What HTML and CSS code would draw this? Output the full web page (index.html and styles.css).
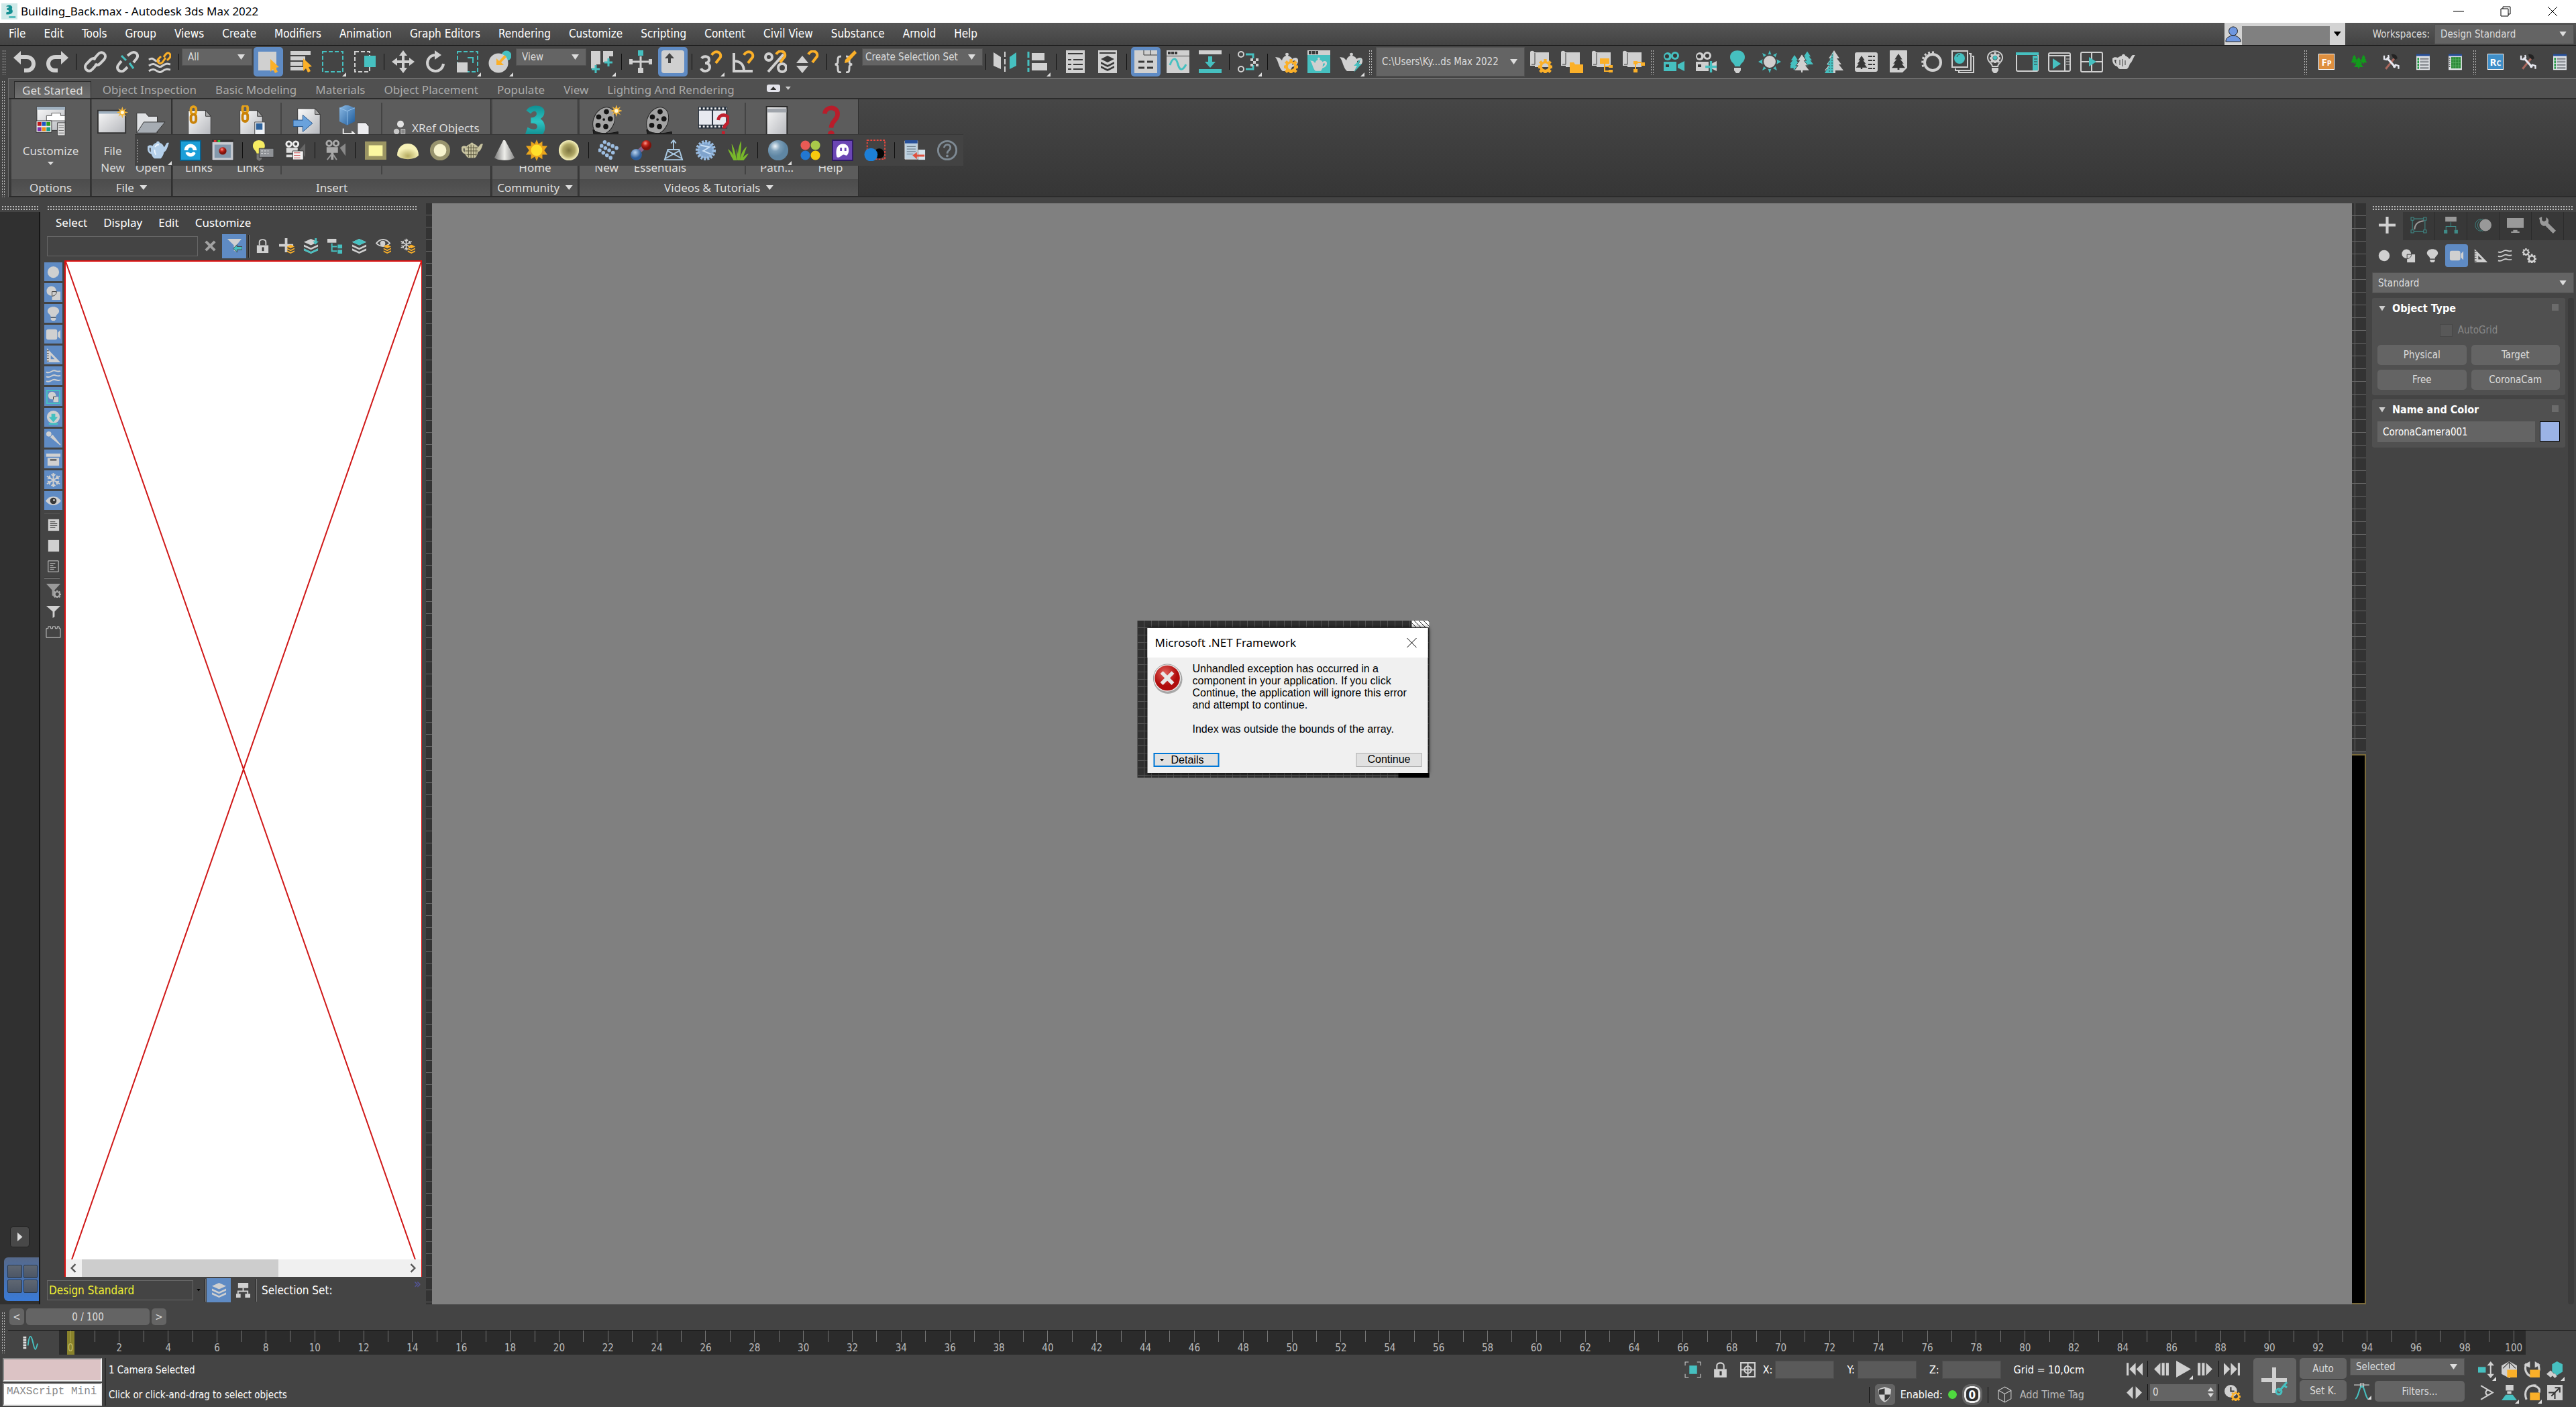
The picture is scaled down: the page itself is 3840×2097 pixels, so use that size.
FILE: index.html
```html
<!DOCTYPE html>
<html lang="en">
<head>
    <meta charset="UTF-8">
    <meta name="viewport" content="width=device-width, initial-scale=1.0">
    <title>Building_Back.max - Autodesk 3ds Max 2022</title>
    <link rel="stylesheet" href="styles.css">
</head>
<body>
    <!-- Icon sprite -->
    <svg class="sprite" aria-hidden="true">
        <defs>
            <linearGradient id="silver" x1="0" y1="0" x2="1" y2="1"><stop offset="0" stop-color="#fafafa"/><stop offset="1" stop-color="#b4b6bb"/></linearGradient>
            <linearGradient id="teal3" x1="0" y1="0" x2="0" y2="1"><stop offset="0" stop-color="#0f8f92"/><stop offset=".5" stop-color="#2cc4c2"/><stop offset="1" stop-color="#0d8487"/></linearGradient>
            <linearGradient id="blueCube" x1="0" y1="0" x2="1" y2="1"><stop offset="0" stop-color="#8dbbe6"/><stop offset="1" stop-color="#1d5a99"/></linearGradient>
            <linearGradient id="cone" x1="0" y1="0" x2="1" y2="0"><stop offset="0" stop-color="#777"/><stop offset=".5" stop-color="#eeeeea"/><stop offset="1" stop-color="#888"/></linearGradient>
            <radialGradient id="redBall" cx=".4" cy=".3"><stop offset="0" stop-color="#ff9c92"/><stop offset=".5" stop-color="#c3271c"/><stop offset="1" stop-color="#7e120b"/></radialGradient>
            <radialGradient id="blueBall" cx=".4" cy=".3"><stop offset="0" stop-color="#b8d4f0"/><stop offset="1" stop-color="#2d5d98"/></radialGradient>
            <radialGradient id="glassBall" cx=".35" cy=".3"><stop offset="0" stop-color="#eef5fa"/><stop offset=".5" stop-color="#7d9fb8"/><stop offset="1" stop-color="#5f86a3"/></radialGradient>
            <radialGradient id="lightBall"><stop offset="0" stop-color="#7e7640"/><stop offset=".6" stop-color="#b0a866"/><stop offset="1" stop-color="#fbf6c0"/></radialGradient>
            <radialGradient id="dome" cx=".5" cy=".8"><stop offset="0" stop-color="#b5ab60"/><stop offset="1" stop-color="#f7f2b8"/></radialGradient>
            <radialGradient id="error" cx=".4" cy=".3"><stop offset="0" stop-color="#e0605a"/><stop offset="1" stop-color="#b00c0c"/></radialGradient>
        </defs>
        <symbol id="max" viewBox="0 0 34 34"><path d="M0 0h34v34H0z" fill="#cfe9e8"/><path d="M10 6c8-5 16 0 12 6 5 6 0 13-12 11l1-5c5 2 7-3 3-4h-2v-4c5 0 5-4 0-3z" fill="#138f91"/><path d="M16 27h14v4H16z" fill="#4eb9b8"/></symbol>
        <symbol id="undo" viewBox="0 0 34 34"><path class="g" d="M0 11 11 1v6h8c9 0 14 6 14 13s-5 13-13 13h-4v-6h4c4 0 7-3 7-7s-3-7-7-7h-9v8z"/></symbol>
        <symbol id="redo" viewBox="0 0 34 34"><path class="g" d="M34 11 23 1v6h-8C6 7 1 13 1 20s5 13 13 13h4v-6h-4c-4 0-7-3-7-7s3-7 7-7h9v8z"/></symbol>
        <symbol id="link" viewBox="0 0 34 34"><path class="gs w4" d="m14 14 7-8c6-7 15 1 9 8l-6 6c-3 3-6 2-8 1M20 20l-7 8c-6 7-15-1-9-8l6-6c3-3 6-2 8-1"/></symbol>
        <symbol id="unlink" viewBox="0 0 34 34"><path class="gs w4" d="m17 8 4-3c7-6 15 2 9 8l-4 5M8 16l-4 5c-6 7 3 14 9 8l4-4"/><path class="ts w3" d="m8 8 7 7m5 4 6 8"/></symbol>
        <symbol id="bind" viewBox="0 0 34 34"><path class="gs w3" d="M1 14c8-6 8 6 16 1M1 23c10-8 13 6 20 0 5-4 8-3 12-2M1 31c10-8 13 6 20 0 5-4 8-3 12-2"/><path class="os w3" d="m23 10 3-4c4-5 9 0 6 5l-4 4M26 11l-5 7c-4 4-9-1-6-5l4-4"/></symbol>
        <symbol id="cursor" viewBox="0 0 34 34"><path class="g" d="M2 2h27v28H2z"/><path class="o" d="m20 13 13 12-5 1 3 6-4 2-3-6-4 4z"/></symbol>
        <symbol id="byname" viewBox="0 0 34 34"><path class="g" d="M2 1h30v6H2zM2 9h22v6H2zM2 17h18v6H2zM2 25h20v5H2z"/><path class="o" d="m21 12 13 12-5 1 3 6-4 2-3-6-4 4z"/></symbol>
        <symbol id="rect" viewBox="0 0 34 34"><path class="ts w2" stroke-dasharray="6 3" d="M2 2h30v30H2z"/></symbol>
        <symbol id="crossing" viewBox="0 0 34 34"><path class="gs w2" stroke-dasharray="6 3" d="M2 2h22v30H2z"/><path class="t" d="M16 8h17v17H16z"/></symbol>
        <symbol id="move" viewBox="0 0 34 34"><path class="g" d="m17 0 6 8h-4v7h7v-4l8 6-8 6v-4h-7v7h4l-6 8-6-8h4v-7H8v4l-8-6 8-6v4h7V8h-4z"/></symbol>
        <symbol id="rotate" viewBox="0 0 34 34"><path class="gs w4" d="M16 7a12 12 0 1 0 13 13"/><path class="g" d="m16 0 10 7-10 7z"/></symbol>
        <symbol id="scale" viewBox="0 0 34 34"><path class="ts w2" stroke-dasharray="6 3" d="M2 2h30v30H2z"/><path class="g" d="M1 18h16v15H1z"/><path class="ts w2" d="M17 11h8v8"/></symbol>
        <symbol id="place" viewBox="0 0 34 34"><circle class="t" cx="27" cy="8" r="7.500"/><circle class="g" cx="15" cy="19" r="14.500"/><path class="o" d="m12 12 4 4 8-9 3 3-8 8 4 4H12z"/></symbol>
        <symbol id="pivot" viewBox="0 0 34 34"><path class="g" d="M0 1h14v20H8v6H0zM18 1h15v8h-6v9h-9z"/><path class="ts w3" d="M7 22v12M1 28h12M26 12v12M20 18h12"/></symbol>
        <symbol id="manip" viewBox="0 0 34 34"><path class="t" d="M13 0h8v8h-8z"/><path class="gs w3" d="M17 9v19M3 17h28"/><path class="g" d="M13 26h8v8h-8zM0 13h5v8H0zM29 13h5v8h-5z"/></symbol>
        <symbol id="keys" viewBox="0 0 34 34"><rect class="g" width="34" height="34" rx="4"/><path d="m12 4 7 8h-5v7h-4v-7H5z" fill="#444"/></symbol>
        <symbol id="snap" viewBox="0 0 34 34"><path class="gs w4" d="M3 12c2-4 11-4 11 2 0 4-4 5-6 5 4 0 7 2 7 6 0 7-11 8-13 2"/><path class="os w4" d="M18 7c4-8 15-5 13 3l-7 9"/></symbol>
        <symbol id="angle" viewBox="0 0 34 34"><path class="gs w4" d="M3 4v27h28M3 16c10 0 15 6 15 15"/><path class="os w4" d="M18 7c4-8 15-5 13 3l-7 9"/></symbol>
        <symbol id="percent" viewBox="0 0 34 34"><path class="gs w4" d="M29 6 6 32"/><circle class="gs w4" cx="7" cy="10" r="5"/><circle class="gs w4" cx="27" cy="26" r="6"/><path class="os w4" d="M18 6c4-8 15-5 13 3l-7 9"/></symbol>
        <symbol id="spinsnap" viewBox="0 0 34 34"><path class="g" d="m9 8 9 11H0zM0 23h18L9 34z"/><path class="os w4" d="M18 6c4-8 15-5 13 3l-7 9"/></symbol>
        <symbol id="braces" viewBox="0 0 34 34"><path class="gs w3" d="M10 9c-5 0-5 2-5 6s0 5-4 6c4 1 4 2 4 6s0 6 5 6M17 9c5 0 5 2 5 6s0 5 4 6c-4 1-4 2-4 6s0 6-5 6"/><path class="o" d="M30 0l3 4-13 14-5 1 1-5z"/></symbol>
        <symbol id="mirror" viewBox="0 0 34 34"><path class="g" d="m0 3 11 7v18L0 23z"/><path class="gs w2" stroke-dasharray="8 3" d="M17 2v30"/><path class="t" d="M34 3 24 10v18l10-5z"/></symbol>
        <symbol id="align" viewBox="0 0 34 34"><path class="ts w3" stroke-dasharray="9 3" d="M4 2v30"/><path class="g" d="M9 4h19v11H9zM9 19h23v11H9z"/></symbol>
        <symbol id="sheet" viewBox="0 0 34 34"><path class="g" d="M3 0h28v34H3z"/><path class="ds w2" d="M6 5h22M6 14h5m3 0h14M6 21h5m3 0h14M6 28h5m3 0h14"/></symbol>
        <symbol id="layersheet" viewBox="0 0 34 34"><path class="g" d="M3 0h28v34H3z"/><path class="d" d="M5 3h24v2H5zM17 8l10 5-10 5-10-5zM7 17l10 5 10-5v3l-10 5-10-5zM7 23l10 5 10-5v3l-10 5-10-5z"/></symbol>
        <symbol id="ribbonicon" viewBox="0 0 34 34"><path class="g" d="M0 0h34v34H0z"/><path class="ds w1" d="M14 0v7h20M24 0v7"/><path class="ds w3" d="M6 17h9m4 0h9M6 26h9m4 0h9"/></symbol>
        <symbol id="curve" viewBox="0 0 34 34"><path class="g" d="M0 0h34v34H0z"/><path class="d" d="M2 2h4v4H2zM7 2h4v4H7zM12 2h4v4h-4zM0 8h34v1H0z"/><path class="ts w3" d="M5 22c4-12 9-12 12-1s8 8 12 0"/></symbol>
        <symbol id="schematic" viewBox="0 0 34 34"><path class="g" d="M0 0h34v6H0z"/><path class="t" d="M0 28h34v6H0zM14 9h6v8h5l-8 9-8-9h5z"/></symbol>
        <symbol id="graph" viewBox="0 0 34 34"><circle class="gs w2" cx="6" cy="6" r="4"/><circle class="gs w2" cx="6" cy="28" r="4"/><path class="ts w3" d="M13 6h11v6M13 28h11v-6"/><path class="g" d="M20 12h4v4h-4zM28 12h4v4h-4zM24 16h4v4h-4zM20 20h4v4h-4zM28 20h4v4h-4z"/></symbol>
        <symbol id="teapot" viewBox="0 0 34 34"><path class="g" d="M15 6c0-3 5-3 5 0l-1 2c3 1 6 3 6 5 5-4 10-2 9 4-1 5-5 7-9 8l-3 6H11C5 26 5 16 0 10l6 1 4 4c1-4 3-6 6-7zM26 16c0 2 0 4-1 6 6-2 7-9 1-6z"/></symbol>
        <symbol id="gear" viewBox="0 0 20 20"><path fill-rule="evenodd" d="M8 0h4v3l2 1 2-2 3 3-2 2 1 2h2v4h-2l-1 2 2 2-3 3-2-2-2 1v2H8v-2l-2-1-2 2-3-3 2-2-1-2H0V9h2l1-2-2-2 3-3 2 2 2-1zm2 6a4.500 4.500 0 1 0 .1 0z"/></symbol>
        <symbol id="rsetup" viewBox="0 0 34 34"><use href="#teapot"/><use class="o" href="#gear" x="13" y="13" width="21" height="21"/></symbol>
        <symbol id="rframe" viewBox="0 0 34 34"><path class="t" d="M0 0h34v34H0z"/><path class="g" d="M0 0h34v7H0z"/><path class="d" d="M2 1h4v5H2zM7 1h4v5H7zM12 1h4v5h-4z"/><use href="#teapot" x="3" y="8" width="27" height="25"/></symbol>
        <symbol id="render" viewBox="0 0 34 34"><use href="#teapot"/><path class="t" d="m32 12-11 11h5l-5 10 12-13h-5z"/></symbol>
        <symbol id="scroll" viewBox="0 0 34 34"><path class="g" d="M1 3c0-3 6-3 6 0h22v22H8v-2H1z"/><path class="ds w1" d="M8 4v17H3"/></symbol>
        <symbol id="scrollgear" viewBox="0 0 34 34"><use href="#scroll"/><use class="o" href="#gear" x="13" y="13" width="21" height="21"/></symbol>
        <symbol id="scrollfolder" viewBox="0 0 34 34"><use href="#scroll"/><path class="o" d="M14 18h6l2 3h12v13H14z"/></symbol>
        <symbol id="scrolltree" viewBox="0 0 34 34"><use href="#scroll"/><path class="o" d="M13 12h14v8H13zM26 22h6v4h-6zM26 29h6v4h-6z"/><path class="os w2" d="M20 20v11h6m-6-7h6"/></symbol>
        <symbol id="scrollnodes" viewBox="0 0 34 34"><use href="#scroll"/><path class="o" d="M17 16h6v5h-6zM28 18h6v5h-6zM17 28h6v5h-6z"/><path class="os w2" d="M20 20v9m3-11h5"/></symbol>
        <symbol id="moviecam" viewBox="0 0 34 34"><circle cx="9" cy="9" r="6"/><circle cx="20" cy="8" r="6"/><path d="M3 17h19v14H3zM24 21l10-5v15l-10-5z"/><circle class="d" cx="8" cy="9" r="3"/><circle class="d" cx="20" cy="8" r="3"/><path class="d" d="M6 21h5v4H6z"/></symbol>
        <symbol id="plus" viewBox="0 0 34 34"><path d="M14 2h6v12h12v6H20v12h-6V20H2v-6h12z"/></symbol>
        <symbol id="camplus" viewBox="0 0 34 34"><use class="g" href="#moviecam"/><use class="t" href="#plus" x="16" y="15" width="19" height="19"/></symbol>
        <symbol id="bulbteal" viewBox="0 0 34 34"><path class="t" d="M13 24c0-5-7-6-7-14C6-3 28-3 28 10c0 8-7 9-7 14z"/><path class="g" d="M12 26h10v4l-3 4h-4l-3-4z"/></symbol>
        <symbol id="sun" viewBox="0 0 34 34"><path class="t" d="m17 0 3 8 8-4-3 8 9 5-9 5 3 8-8-4-3 8-3-8-8 4 3-8-9-5 9-5-3-8 8 4z"/><circle class="g" cx="17" cy="17" r="10" stroke="#444" stroke-width="2"/></symbol>
        <symbol id="tree" viewBox="0 0 34 34"><path d="m17 0 8 12h-4l7 9h-4l7 9H19v4h-4v-4H3l7-9H6l7-9H9z"/></symbol>
        <symbol id="trees" viewBox="0 0 34 34"><use class="t" href="#tree" x="-5" y="7" width="22" height="22"/><use class="t" href="#tree" x="14" y="0" width="22" height="25"/><use class="g outlined" href="#tree" x="3" y="5" width="28" height="29"/></symbol>
        <symbol id="halftree" viewBox="0 0 34 34"><use class="g" href="#tree"/><path class="t" d="M16 2v32H3l7-12H7z"/><path stroke="#444" stroke-dasharray="2 2" d="M14 6v26M10 14v18M6 24v8"/></symbol>
        <symbol id="treelist" viewBox="0 0 34 34"><rect class="g" y="3" width="34" height="29" rx="3"/><use class="d" href="#tree" x="0" y="6" width="20" height="24"/><path class="ds w2" d="M20 9h10M20 15h10M20 21h10M20 27h10" stroke-dasharray="6 1"/></symbol>
        <symbol id="treepage" viewBox="0 0 34 34"><path class="g" d="M4 2c0-2 0-2 2-2h22c2 0 2 0 2 2v24l-7 7H6c-2 0-2 0-2-2z"/><use class="d" href="#tree" x="5" y="4" width="24" height="26"/></symbol>
        <symbol id="ringgear" viewBox="0 0 34 34"><circle class="gs w4" cx="20" cy="18" r="12"/><path class="gs w3" stroke-dasharray="3 3" d="M22 3C8 2 2 12 6 25"/></symbol>
        <symbol id="matstack" viewBox="0 0 34 34"><path class="gs w2" d="M1 1h23v24H1zM26 5h3v25H6v-3M31 9h2v24H11v-2"/><circle class="t" cx="12" cy="12" r="8"/><path class="ds w1" d="M8 10c1-3 3-4 5-4"/></symbol>
        <symbol id="bulbgear" viewBox="0 0 34 34"><path class="gs w2" d="M13 24c0-5-7-6-7-13C6-2 28-2 28 11c0 7-7 8-7 13z"/><use class="g" href="#gear" x="9" y="3" width="16" height="16"/><circle class="t" cx="17" cy="11" r="3"/><path class="g" d="M12 26h10v4l-3 4h-4l-3-4z"/></symbol>
        <symbol id="winteal" viewBox="0 0 34 34"><rect class="gs w2" x="1" y="4" width="32" height="27" rx="2"/><path class="t" d="M0 3h34v4H0zM25 8h8v22h-8z"/><path class="ds w1" d="M27 13h5m-5 4h5m-5 4h5"/></symbol>
        <symbol id="winplay" viewBox="0 0 34 34"><rect class="gs w2" x="1" y="4" width="32" height="27" rx="2"/><path class="gs w2" d="M1 8h32M25 8v22"/><path class="t" d="m7 12 12 8-12 8z"/><path class="gs w1" d="M27 13h5m-5 4h5m-5 4h5"/></symbol>
        <symbol id="quadplay" viewBox="0 0 34 34"><rect class="gs w2" x="1" y="3" width="32" height="29" rx="2"/><path class="gs w2" d="M17 3v29M1 17h32"/><path class="t" d="m13 10 11 7-11 7z"/></symbol>
        <symbol id="whitepot" viewBox="0 0 34 34"><path class="g" d="M14 8c0-3 5-3 5 0 3 1 5 3 6 5 2-1 3-5 5-6h4c-3 3-4 10-8 13-1 4-3 7-5 8H11c-2-1-3-2-4-4-6-1-8-9-7-12 2-2 5-2 8-1 1-1 3-2 6-3zM3 14c0 3 1 5 3 7-1-3-1-5 0-7z"/><path class="ds w1" d="M11 14v8m4-9v11m4-9v7"/></symbol>
        <symbol id="greentrees" viewBox="0 0 34 34"><g fill="#129a1c"><use href="#tree" x="0" y="1" width="17" height="22"/><use href="#tree" x="18" y="1" width="17" height="22"/><use href="#tree" x="6" y="4" width="22" height="30"/></g></symbol>
        <symbol id="tools" viewBox="0 0 34 34"><path d="M7 31 24 10" stroke="#a9675d" stroke-width="4"/><path d="M18 3c6-2 10 1 12 7l-4 3-5-4z" fill="#222"/><path d="m9 9 17 19" stroke="#e6e8f0" stroke-width="4"/><path d="M4 5v7l5 1 4-4-1-5M22 28l4-5 6 2v6" fill="none" stroke="#e6e8f0" stroke-width="3"/></symbol>
        <symbol id="listwin" viewBox="0 0 34 34"><path d="M4 4h26v29H4z" fill="#e3e6ea"/><path d="M4 2h26v4H4z" fill="#27509a"/><path d="M6 9h3v5H6zm0 6h3v5H6zm0 6h3v5H6zm0 6h3v4H6z" fill="#18963a"/><path d="M11 9h17v4H11zm0 6h17v4H11zm0 6h17v4H11zm0 6h17v4H11z" fill="#92969b"/></symbol>
        <symbol id="gridwin" viewBox="0 0 34 34"><path d="M4 4h26v29H4z" fill="#e3e6ea"/><path d="M4 2h26v4H4z" fill="#27509a"/><path d="M9 8h19v22H9z" fill="#2c8a38"/><path d="M13 8v22M18 8v22M23 8v22M9 13h19M9 19h19M9 25h19" stroke="#5cb266"/><path d="M6 9v20" stroke="#444" stroke-width="2" stroke-dasharray="2 2"/></symbol>
        <!-- ribbon -->
        <symbol id="customizeui" viewBox="0 0 48 48"><path d="M2 2h44v37H2z" fill="url(#silver)" stroke="#333"/><path d="M2 2h44v5H2z" fill="#9fb0bf"/><path d="M17 16h8v-4h14v4h7v8H17z" fill="#fff" stroke="#555"/><path d="M1 24h24v18H1z" fill="#e8e8e8" stroke="#333"/><path fill="#c21b1b" d="M3 26h6v6H3z"/><path fill="#1c55c4" d="M10 26h6v6h-6z"/><path fill="#2d9a1c" d="M17 26h6v6h-6z"/><path fill="#7a30b0" d="M3 34h6v6H3z"/><path fill="#ef8d1a" d="M10 34h6v6h-6z"/><path fill="#199b85" d="M17 34h6v6h-6z"/><path d="M34 27h12v20H34z" fill="#ddd" stroke="#444"/><path d="M36 31h8m-8 4h8m-8 4h8m-8 4h8" stroke="#666"/></symbol>
        <symbol id="star" viewBox="0 0 20 20"><path d="m10 0 2 6 5-3-3 5 6 2-6 2 3 5-5-3-2 6-2-6-5 3 3-5-6-2 6-2-3-5 5 3z" fill="#f3b63c"/><circle cx="10" cy="10" r="3" fill="#fff8d8"/></symbol>
        <symbol id="filenew" viewBox="0 0 48 48"><path d="M1 8h43v35H1z" fill="url(#silver)" stroke="#333" stroke-width="2"/><path d="M2 9h41v4H2z" fill="#9fb0bf"/><use href="#star" x="30" y="2" width="18" height="18"/></symbol>
        <symbol id="fileopen" viewBox="0 0 48 48"><path d="M3 12h14l4 5h14v26H3z" fill="#dfe1e4" stroke="#333"/><path d="M14 26h33L33 43H3z" fill="#a6acb3" stroke="#333"/></symbol>
        <symbol id="page" viewBox="0 0 48 48"><path d="M7 8h27l8 9v31H7z" fill="url(#silver)" stroke="#333"/><path d="m34 8 8 9h-8z" fill="#aaa" stroke="#333"/></symbol>
        <symbol id="chain" viewBox="0 0 14 30"><rect x="3" y="2" width="8" height="12" rx="4" fill="none" stroke="#e6a119" stroke-width="4"/><rect x="3" y="14" width="8" height="13" rx="4" fill="none" stroke="#c98208" stroke-width="4"/></symbol>
        <symbol id="filelink" viewBox="0 0 48 48"><use href="#page"/><use href="#chain" x="8" y="0" width="14" height="30"/></symbol>
        <symbol id="linkmanage" viewBox="0 0 48 48"><use href="#page"/><path d="M30 26h16v22H30z" fill="#eef1f5" stroke="#444"/><path d="M32 28h10v10H32z" fill="#2f639c"/><use href="#chain" x="8" y="-2" width="14" height="30"/></symbol>
        <symbol id="import" viewBox="0 0 48 48"><use href="#page" y="-3"/><path d="M0 23h15v-8l15 13-15 13v-8H0z" fill="#6aa2dc" stroke="#1f4f86"/></symbol>
        <symbol id="cubedoc" viewBox="0 0 48 48"><path d="M1 4 12-1l13 5v21l-12 6L1 25z" fill="url(#blueCube)"/><path d="m1 4 12 5 12-5M13 9v21" stroke="#9bc5ec" fill="none"/><path d="M7 36v8h14" fill="none" stroke="#eee" stroke-width="2"/><path d="m20 39 6 5-6 4z" fill="#eee"/><path d="M29 27h13l5 6v16H29z" fill="#ececef" stroke="#444"/></symbol>
        <symbol id="xref" viewBox="0 0 26 26"><circle cx="13" cy="7" r="6" fill="#e2e2e2"/><circle cx="6" cy="20" r="5" fill="#c8c8c8"/><path d="M14 16h7v8h-7z" fill="#888" stroke="#ccc"/></symbol>
        <symbol id="three" viewBox="0 0 48 48"><path d="M10 8C16-3 40-2 38 11c0 5-3 8-6 10 8 4 10 20 1 26-7 5-18 4-25-1l4-12c5 4 15 5 15-1 0-5-6-5-10-5v-9c5 0 9-2 9-6 0-5-6-5-9 0z" fill="url(#teal3)"/></symbol>
        <symbol id="reel" viewBox="0 0 48 48"><ellipse cx="20" cy="24" rx="16" ry="22" transform="rotate(25 20 24)" fill="#a3a3a3" stroke="#222"/><g fill="#151515"><circle cx="24" cy="10" r="4"/><circle cx="12" cy="18" r="4"/><circle cx="30" cy="21" r="4"/><circle cx="11" cy="31" r="4"/><circle cx="23" cy="33" r="4"/><circle cx="20" cy="22" r="2"/></g><path d="M3 38c10 8 28 6 39 3v9H5z" fill="#222" stroke="#111"/></symbol>
        <symbol id="reelnew" viewBox="0 0 48 48"><use href="#reel"/><use href="#star" x="30" y="-1" width="19" height="19"/></symbol>
        <symbol id="film" viewBox="0 0 48 48"><path d="M0 2h45v34H0z" fill="#26303c"/><path d="M1 8h20v22H1zM23 8h20v22H23z" fill="#e7eaf0"/><path d="M1 5h43M1 33h43" stroke="#f2f2f2" stroke-width="3" stroke-dasharray="3 3"/><path d="M31 23c1-11 17-10 16 0 0 6-7 7-7 13M39 40v6" stroke="#c0202e" stroke-width="5" fill="none"/></symbol>
        <symbol id="book" viewBox="0 0 48 48"><path d="M8 2h32v46H8z" fill="url(#silver)" stroke="#2b2b2b" stroke-width="2"/><path d="M9 5h30v6H9z" fill="#9fa4ab"/></symbol>
        <symbol id="question" viewBox="0 0 48 48"><path d="M15 13c1-12 21-12 20 1 0 9-9 9-10 21" fill="none" stroke="#b81d2b" stroke-width="7"/><circle cx="25" cy="44" r="5" fill="#b81d2b"/></symbol>
        <!-- corona -->
        <symbol id="cpot" viewBox="0 0 34 34"><path d="M14 5c0-3 5-3 5 0 4 1 6 4 7 7 2-1 3-6 5-7h3c-2 5-3 12-8 15-1 5-3 8-5 10H11c-2-1-4-4-5-7-6-1-7-9-6-12 2-3 6-2 8-1 1-3 3-4 6-5zM3 13c0 3 0 5 2 7v-7z" fill="#b5d0ea"/><path d="M12 12c1-3 4-4 6-4M11 16c0 4 1 6 2 8" stroke="#eef6ff" fill="none" stroke-width="2"/></symbol>
        <symbol id="corona" viewBox="0 0 34 34"><path d="M1 2h32v31H1z" fill="#1a9ed8" stroke="#0a5d86" stroke-width="2"/><path d="M7 17a10 10 0 0 1 20 0l-6 0c-1-6-7-6-8 0zM9 21c4-3 8 2 10 0s5-2 6 1c-3 7-13 7-16-1z" fill="#fff"/></symbol>
        <symbol id="cframe" viewBox="0 0 34 34"><path d="M0 1h34v32H0z" fill="#c9ccd2" stroke="#222"/><path d="M0 1h34v3H0z" fill="#333"/><path d="M3 1h4v3H3z" fill="#e33"/><path d="M9 1h4v3H9z" fill="#3c3"/><path d="M4 8h26v21H4z" fill="#8398ab"/><circle cx="17" cy="18" r="6" fill="url(#redBall)"/></symbol>
        <symbol id="cbulb" viewBox="0 0 34 34"><path d="M7 22c0-4-6-6-6-12C1-2 20-2 20 10c0 6-6 7-6 12z" fill="#f6ec62"/><path d="M7 23h8v8l-4 3-4-3z" fill="#777"/><path d="M11 14h23v14H11z" fill="#8f9296" stroke="#333"/><path d="M14 18h12m-12 4h12" stroke="#eee" stroke-dasharray="3 2"/></symbol>
        <symbol id="ccam" viewBox="0 0 34 34"><circle cx="7" cy="7" r="4" fill="none" stroke="#eee" stroke-width="3"/><circle cx="18" cy="7" r="4" fill="none" stroke="#eee" stroke-width="3"/><path d="M3 13h18v8H3zM3 24h12v4H3z" fill="#ddd"/><path d="m24 16 9-10v22z" fill="#666"/><path d="M13 18h17v14H13z" fill="#f2f2f2" stroke="#333"/><path d="M15 21h10m-10 4h10m-10 4h10" stroke="#c44"/></symbol>
        <symbol id="ccam2" viewBox="0 0 34 34"><circle cx="7" cy="6" r="4" fill="none" stroke="#aaa" stroke-width="3"/><circle cx="18" cy="6" r="4" fill="none" stroke="#aaa" stroke-width="3"/><path d="M3 12h18v9H3zM10 21h4v11h-4z" fill="#aaa"/><path d="m24 13 9-7v20z" fill="#888"/><path d="m11 23-7 9m9-9 6 9" stroke="#999" stroke-width="2"/></symbol>
        <symbol id="clrect" viewBox="0 0 34 34"><path d="M3 6h28v23H3z" fill="#fbf7a0" stroke="#9b9563" stroke-width="6"/></symbol>
        <symbol id="cldome" viewBox="0 0 34 34"><path d="M0 25C0 0 34 0 34 25c-6 8-28 8-34 0z" fill="url(#dome)"/></symbol>
        <symbol id="clsphere" viewBox="0 0 34 34"><circle cx="17" cy="17" r="13" fill="#f7f4cf" stroke="#98946e" stroke-width="6"/></symbol>
        <symbol id="clpot" viewBox="0 0 34 34"><path d="M14 7c0-3 5-3 5 0 4 1 6 3 7 5 2-1 3-4 5-5h3c-2 5-3 11-8 13-1 5-3 8-5 9H11c-2-1-4-3-5-6-6-1-7-8-6-11 2-3 6-2 8-1 1-2 3-3 6-4zM3 14c0 3 0 4 2 6v-6z" fill="#c9c4a0"/><path d="M8 13h18M6 18h20M8 24h16M11 10v18M15 8v21M19 9v20M23 12v14" stroke="#55523c"/></symbol>
        <symbol id="clcone" viewBox="0 0 34 34"><path d="m15 1 3 0 15 28c-6 5-26 5-32 0z" fill="url(#cone)"/></symbol>
        <symbol id="clsun" viewBox="0 0 34 34"><path d="m17 0 3 7 6-4v7l8 0-5 7 5 7-8 0v7l-6-4-3 7-3-7-6 4v-7l-8 0 5-7-5-7 8 0V3l6 4z" fill="#e9a51d"/><circle cx="17" cy="17" r="9" fill="#ffe02b"/></symbol>
        <symbol id="cldisc" viewBox="0 0 34 34"><circle cx="17" cy="17" r="16" fill="url(#lightBall)"/></symbol>
        <symbol id="cscatter" viewBox="0 0 34 34"><g stroke="#9dbde0" stroke-width="6" stroke-linecap="round" stroke-dasharray="0 7"><path d="m10 4 22 11M5 10l22 13M2 17l22 15"/></g></symbol>
        <symbol id="cproxy" viewBox="0 0 34 34"><path d="m10 22 14-13" stroke="#88658a" stroke-width="7"/><circle cx="9" cy="24" r="9" fill="url(#blueBall)"/><circle cx="25" cy="9" r="8" fill="url(#redBall)"/></symbol>
        <symbol id="cdecal" viewBox="0 0 34 34"><path d="M3 32 8 16h18l5 16zM4 30l22-12M30 30 8 18M17 16V2m-4 4 4-5 4 5" fill="none" stroke="#a9c9e3" stroke-width="2"/></symbol>
        <symbol id="cfur" viewBox="0 0 34 34"><circle cx="17" cy="17" r="13" fill="#7fa3cc" stroke="#9abde2" stroke-width="6" stroke-dasharray="3 2"/><path d="m9 9 14 3-10 6 12 5" stroke="#c9dff5" fill="none" stroke-width="2"/></symbol>
        <symbol id="cgrass" viewBox="0 0 34 34"><path d="M14 33C10 24 6 18 1 15c4 10 7 14 9 18zm1 0C13 20 10 10 7 7c1 8 2 18 6 26zm2 0C16 20 19 8 22 2c1 10-1 20-2 31zm3 0c1-10 6-18 11-22-3 10-6 17-7 22zm-5 0V14l4 18zm8 0c2-6 6-9 11-11-3 5-6 8-8 11z" fill="#78b82a"/></symbol>
        <symbol id="cball" viewBox="0 0 34 34"><circle cx="17" cy="17" r="16" fill="url(#glassBall)"/></symbol>
        <symbol id="cfour" viewBox="0 0 34 34"><circle cx="9" cy="9" r="7.500" fill="#e85a55"/><circle cx="25" cy="9" r="7.500" fill="#a9c94a"/><circle cx="9" cy="25" r="7.500" fill="#2377d0"/><circle cx="25" cy="25" r="7.500" fill="#f7c80f"/></symbol>
        <symbol id="cghost" viewBox="0 0 34 34"><path d="M1 1h32v32H1z" fill="#6b46b4" stroke="#2e1a63" stroke-width="2"/><path d="M8 28c-2-8-2-20 9-21s12 13 7 18c-2 1-4-2-6-1-3 1-6 6-10 4z" fill="#fff"/><path d="M13 13h3v5h-3zM20 13h3v5h-3z" fill="#6b46b4"/></symbol>
        <symbol id="cregion" viewBox="0 0 34 34"><path d="M5 1h28v30H5z" fill="none" stroke="#e8493f" stroke-width="2" stroke-dasharray="3 2"/><circle cx="24" cy="22" r="8" fill="#050505"/><circle cx="11" cy="24" r="10.500" fill="#1d7fd6"/></symbol>
        <symbol id="cconvert" viewBox="0 0 34 34"><path d="M1 2h20v29H1z" fill="#bcd0df" stroke="#ddd"/><path d="M1 1h20v5H1z" fill="#27509a"/><path d="M4 11h14M4 15h14M4 19h14M4 23h10" stroke="#5c6b77"/><path d="M22 16h11v16H22z" fill="#d6e3ec"/><path d="M32 24H20v-4l-7 5 7 6v-4h12z" fill="#e0503d"/></symbol>
        <symbol id="chelp" viewBox="0 0 34 34"><circle cx="17" cy="17" r="14.500" fill="none" stroke="#7e8a94" stroke-width="3"/><path d="M12 13c1-7 11-6 10 0 0 4-5 4-5 9" fill="none" stroke="#7e8a94" stroke-width="3"/><circle cx="17" cy="26" r="2" fill="#7e8a94"/></symbol>
        <!-- explorer and panels -->
        <symbol id="circle" viewBox="0 0 24 24"><circle class="g" cx="12" cy="12" r="9"/></symbol>
        <symbol id="shapes" viewBox="0 0 24 24"><circle class="g" cx="9" cy="9" r="7.500"/><path class="g" d="M10 10h13v13H10z"/><path class="ds w1" d="M10 17v-7h7c0 4-3 7-7 7z"/></symbol>
        <symbol id="bulb" viewBox="0 0 24 24"><path class="g" d="M8 17c0-4-5-5-5-9 0-9 18-9 18 0 0 4-5 5-5 9zM8 18h8v3l-2 2h-4l-2-2z"/><path class="ds w1" d="M8 18h8"/></symbol>
        <symbol id="camera" viewBox="0 0 24 24"><rect class="g" x="1" y="4" width="17" height="16" rx="3"/><path class="g" d="m19 9 4-4v14l-4-4z"/></symbol>
        <symbol id="ruler" viewBox="0 0 24 24"><path class="g" fill-rule="evenodd" d="m2 1 21 22H2zm6 11v6h6z"/><path class="ds w1" d="M2 5h3M2 9h3M2 13h3M2 17h3M2 21h3"/></symbol>
        <symbol id="waves" viewBox="0 0 24 24"><path class="gs w2" d="M1 6c8 3 8-5 15-2 3 1 5 1 7 0M1 13c8 3 8-5 15-2 3 1 5 1 7 0M1 20c8 3 8-5 15-2 3 1 5 1 7 0"/></symbol>
        <symbol id="gears" viewBox="0 0 24 24"><use class="g" href="#gear" x="1" y="0" width="12" height="12"/><use class="g" href="#gear" x="9" y="9" width="15" height="15"/></symbol>
        <symbol id="groups" viewBox="0 0 24 24"><path class="ts w2" d="M2 2h20v20H2z"/><circle class="g" cx="10" cy="10" r="6"/><path class="g" d="M12 12h8v8h-8z"/><path class="ds w1" d="M12 16v-4h4"/></symbol>
        <symbol id="xrefs" viewBox="0 0 24 24"><circle class="g" cx="12" cy="11" r="10"/><path class="t" d="M9 6h6v5h4l-7 8-7-8h4zM5 20h14v3H5z"/></symbol>
        <symbol id="bone" viewBox="0 0 24 24"><circle class="g" cx="5" cy="5" r="4"/><path class="g" d="m7 10 4-4 12 15v2z"/></symbol>
        <symbol id="box" viewBox="0 0 24 24"><path class="g" d="M1 3h22v5H1zM3 10h18v12H3z"/><path class="ds w2" d="M7 13h10"/></symbol>
        <symbol id="snow" viewBox="0 0 24 24"><path class="gs w2" d="M12 1v22M2 6l20 12M22 6 2 18M9 3l3 3 3-3M9 21l3-3 3 3M3 10l4-1-1-4M21 10l-4-1 1-4M3 14l4 1-1 4M21 14l-4 1 1 4"/></symbol>
        <symbol id="eye" viewBox="0 0 24 24"><path class="g" d="M0 12C6 3 18 3 24 12 18 21 6 21 0 12z"/><circle class="d" cx="12" cy="12" r="5"/><circle class="g" cx="13" cy="11" r="1.500"/></symbol>
        <symbol id="doc" viewBox="0 0 24 24"><path class="g" d="M4 3h17v18H4z"/><path class="ds w1" d="M7 7h8M7 10h11M7 13h11M7 16h8"/></symbol>
        <symbol id="blank" viewBox="0 0 24 24"><path class="g" d="M4 3h17v18H4z"/></symbol>
        <symbol id="docline" viewBox="0 0 24 24"><path class="gs w1" d="M4 3h16v17H4zM7 7h8M7 10h5M7 13h9M7 16h6"/></symbol>
        <symbol id="funnelgear" viewBox="0 0 24 24"><path fill="#999" d="M1 1h22l-9 10v11l-4-3v-8z"/><use fill="#aaa" href="#gear" x="12" y="11" width="12" height="12"/></symbol>
        <symbol id="funnel" viewBox="0 0 24 24"><path class="g" d="M1 3h22l-9 9v8l-3 2V12z"/></symbol>
        <symbol id="brick" viewBox="0 0 24 24"><path class="gs w1" d="M1 20V6h3V3h4v3h3V3h4v3h3V3h3v3h2v14z"/></symbol>
        <symbol id="filtericon" viewBox="0 0 24 24"><path class="g" d="M1 1h22l-8 10v11l-4-3v-8z"/><path class="t" d="m10 16 6-6v3h8v5h-8v4z" stroke="#444"/></symbol>
        <symbol id="lock" viewBox="0 0 24 24"><path class="gs w2" d="M7 11V6c0-5 10-5 10 0v5"/><path class="g" d="M3 11h18v12H3z"/><path class="d" d="M11 14h3v6h-3z"/></symbol>
        <symbol id="coins" viewBox="0 0 12 14"><path class="o" d="m6 0 6 3-6 3-6-3zM0 5l6 3 6-3v2L6 10 0 7zM0 9l6 3 6-3v2l-6 3-6-3z"/></symbol>
        <symbol id="addlayer" viewBox="0 0 24 24"><path class="g" d="M9 0h4v9h9v4h-9v9H9v-9H0V9h9z"/><use href="#coins" x="12" y="10" width="12" height="14"/></symbol>
        <symbol id="layers" viewBox="0 0 24 24"><path class="g" d="m12 1 11 5-11 5L1 6z"/><path class="g" d="m1 10 11 5 11-5v3l-11 5-11-5z"/><path class="g" d="m1 16 11 5 11-5v3l-11 5-11-5z"/></symbol>
        <symbol id="layeradd" viewBox="0 0 24 24"><use href="#layers"/><path class="t" d="m1 16 11 5 11-5v3l-11 5-11-5zM18 0h3v5h3l-5 5-4-5h3z"/></symbol>
        <symbol id="layertop" viewBox="0 0 24 24"><use href="#layers"/><path class="t" d="m12 1 11 5-11 5L1 6z"/></symbol>
        <symbol id="hier" viewBox="0 0 24 24"><path class="g" d="M0 1h14v6H0z"/><path class="ts w2" d="M7 8v12h8M7 13h8"/><path class="t" d="M16 10h7v6h-7zM16 18h7v6h-7z"/></symbol>
        <symbol id="eyelayer" viewBox="0 0 24 24"><path class="gs w2" d="M1 8c6-8 15-8 21 0-6 6-15 6-21 0z"/><circle class="g" cx="11" cy="8" r="4"/><use href="#coins" x="12" y="10" width="12" height="14"/></symbol>
        <symbol id="snowlayer" viewBox="0 0 24 24"><use href="#snow" width="20" height="20"/><use href="#coins" x="12" y="10" width="12" height="14"/></symbol>
        <symbol id="nodes" viewBox="0 0 24 24"><path class="g" d="M4 1h16v8H4zM1 18h7v6H1zM15 18h8v6h-8z"/><path class="gs w2" d="M12 9v5M4 18v-4h15v4"/></symbol>
        <symbol id="modify" viewBox="0 0 24 24"><path class="dim" fill="none" d="M3 3h18v18H3z"/><path d="M1 1h4v4H1zM19 1h4v4h-4zM1 19h4v4H1zM19 19h4v4h-4z" fill="#383838" class="dim"/><path d="M6 18C7 10 11 7 19 6" fill="none" stroke="#999" stroke-width="2"/></symbol>
        <symbol id="hierarchy" viewBox="0 0 24 24"><path fill="#999" d="M4 0h16v7H4z"/><path class="dim" fill="none" d="M12 8v6M5 19v-5h14v5"/><path fill="#3f8b88" d="M2 19h5v5H2zM17 19h5v5h-5z"/></symbol>
        <symbol id="motion" viewBox="0 0 28 24"><path class="dim" fill="none" d="M10 2C-2 4-2 20 10 22M14 2C2 4 2 20 14 22"/><circle cx="18" cy="12" r="10" fill="#999"/></symbol>
        <symbol id="display" viewBox="0 0 24 24"><path fill="#999" d="M0 2h24v14H0zM9 19h6v2h3v2H6v-2h3z"/></symbol>
        <symbol id="wrench" viewBox="0 0 24 24"><path fill="#999" d="M4 0 4 5l3 2 3-2V1c4 2 4 5 3 8l11 11-4 4L9 13C5 14 1 11 1 5l-1-3z"/></symbol>
        <symbol id="create" viewBox="0 0 24 24"><path class="g" d="M10 0h4v10h10v4H14v10h-4V14H0v-4h10z"/></symbol>
        <!-- playback and navigation -->
        <symbol id="isolate" viewBox="0 0 24 24"><path class="t" d="M7 6h11v12H7z"/><path class="gs w1" d="M1 6V1h5M18 1h5v5M23 18v5h-5M6 23H1v-5"/></symbol>
        <symbol id="abs" viewBox="0 0 24 24"><path class="gs w2" d="M2 2h20v20H2zM12 2v20M2 12h20"/><circle class="gs w2" cx="12" cy="12" r="5"/></symbol>
        <symbol id="shield" viewBox="0 0 24 24"><path class="g" d="M12 1 3 4c0 10 2 15 9 19 7-4 9-9 9-19z"/><path class="d" d="M12 3v9H4C3 9 4 6 4 5zM12 12h8c-1 4-3 7-8 9z"/></symbol>
        <symbol id="cubeline" viewBox="0 0 24 24"><path class="gs w1" d="m12 1 9 5v12l-9 5-9-5V6zM3 6l9 5 9-5M12 11v12"/></symbol>
        <symbol id="tostart" viewBox="0 0 24 24"><path class="g" d="M1 3h3v18H1zM14 3v18L5 12zM24 3v18l-9-9z"/></symbol>
        <symbol id="prev" viewBox="0 0 24 24"><path class="g" d="M11 3v18L2 12zM13 3h4v18h-4zM19 3h4v18h-4z"/></symbol>
        <symbol id="play" viewBox="0 0 24 24"><path class="g" d="m2 0 21 12L2 24z"/></symbol>
        <symbol id="next" viewBox="0 0 24 24"><path class="g" d="M1 3h4v18H1zM7 3h4v18H7zM13 3v18l9-9z"/></symbol>
        <symbol id="toend" viewBox="0 0 24 24"><path class="g" d="M0 3v18l9-9zM10 3v18l9-9zM20 3h3v18h-3z"/></symbol>
        <symbol id="keymode" viewBox="0 0 24 24"><path class="g" d="M10 3v18L1 12zM14 3v18l9-9z"/></symbol>
        <symbol id="clock" viewBox="0 0 24 24"><circle class="g" cx="10" cy="10" r="9"/><path class="ds w2" d="M10 4v6h5"/><use class="o" href="#gear" x="10" y="10" width="14" height="14"/></symbol>
        <symbol id="setkey" viewBox="0 0 44 44"><path class="g" d="M18 2h6v16h16v6H24v16h-6V24H2v-6h16z"/><path class="ts w3" d="m40 24-12 14M36 29l4 3"/><circle class="ts w3" cx="28" cy="38" r="4"/></symbol>
        <symbol id="tangent" viewBox="0 0 24 24"><path class="gs w1" d="M1 3h22M10 1h5v5h-5z"/><path class="ts w2" d="M3 23C8 20 8 6 12 5s5 15 9 18"/></symbol>
        <symbol id="zoomicon" viewBox="0 0 24 24"><path class="t" d="M0 8h11v8H0z"/><path class="gs w2" d="M18 4v16"/><path class="g" d="m18 0 5 6H13zM18 24l5-6H13z"/></symbol>
        <symbol id="zoomcube" viewBox="0 0 24 24"><path class="g" d="m12 0 11 6v12l-11 6L1 18V6z"/><path class="ds w1" d="m3 10 9-9 9 9M12 1v9"/><path class="o" d="M9 12h14v11H9z"/></symbol>
        <symbol id="orbit" viewBox="0 0 24 24"><path class="gs w3" d="M4 3c-4 8 0 16 6 18M20 3c4 8 2 12-1 16"/><path class="g" d="M0 5 9 0v9zM24 5l-8-5v9z"/><path class="o" d="M9 12h14v11H9z"/></symbol>
        <symbol id="region" viewBox="0 0 24 24"><path class="t" d="m15 0 8 4v11l-8 5-7-5V4z"/><path class="g" d="m0 18 6-5 5 5-5 5zM8 20l4-3 3 4-3 3z"/></symbol>
        <symbol id="fov" viewBox="0 0 24 24"><path class="gs w2" d="m4 2 17 10L4 22M14 8c-4 2-4 6 0 8"/></symbol>
        <symbol id="dolly" viewBox="0 0 24 24"><path class="g" d="M7 1h11v8H7zM9 10h6v4H9z"/><path class="t" d="M7 15h10l6 8H1z"/></symbol>
        <symbol id="arc" viewBox="0 0 24 24"><path class="gs w3" d="M18 2C4 0 0 12 4 22M14 2c8 2 10 6 8 10"/><path class="o" d="M9 12h14v11H9z"/></symbol>
        <symbol id="maximize" viewBox="0 0 24 24"><path class="g" d="M1 1h22v22H1z"/><path class="ds w2" d="m7 17 12-12M12 5h7v7M3 12h9v9"/></symbol>
        <symbol id="minicurve" viewBox="0 0 24 24"><path stroke="#ddd" stroke-width="5" stroke-dasharray="3 1" d="M3 2v20"/><path class="ts w2" d="M8 16c2-18 5-18 8-4s4 12 7 1"/></symbol>
    </svg>

    <header class="titlebar">
        <svg class="app-icon"><use href="#max"/></svg>
        <h1>Building_Back.max - Autodesk 3ds Max 2022</h1>
        <div class="window-buttons">
            <button aria-label="Minimize"><svg viewBox="0 0 16 16"><path d="M0 8h16"/></svg></button>
            <button aria-label="Restore"><svg viewBox="0 0 16 16"><path d="M1 4h11v11H1zM4 4V1h11v11h-3"/></svg></button>
            <button aria-label="Close"><svg viewBox="0 0 16 16"><path d="m1 1 14 14M15 1 1 15"/></svg></button>
        </div>
    </header>

    <nav class="menubar">
        <a href="#">File</a>
        <a href="#">Edit</a>
        <a href="#">Tools</a>
        <a href="#">Group</a>
        <a href="#">Views</a>
        <a href="#">Create</a>
        <a href="#">Modifiers</a>
        <a href="#">Animation</a>
        <a href="#">Graph Editors</a>
        <a href="#">Rendering</a>
        <a href="#">Customize</a>
        <a href="#">Scripting</a>
        <a href="#">Content</a>
        <a href="#">Civil View</a>
        <a href="#">Substance</a>
        <a href="#">Arnold</a>
        <a href="#">Help</a>
        <button class="user" aria-label="Account">
            <svg viewBox="0 0 26 26"><circle cx="13" cy="8" r="7"/><path d="M1 25c0-7 6-8 9-10h6c3 2 9 3 9 10z"/></svg>
            <span class="user-name"></span>
            <span class="arrow"></span>
        </button>
        <label class="workspaces" for="workspace">Workspaces:</label>
        <span class="select workspace-select"><select id="workspace"><option>Design Standard</option></select></span>
    </nav>

    <div class="toolbar">
        <span class="grip"></span>
        <button class="tool" aria-label="Undo"><svg><use href="#undo"/></svg></button>
        <button class="tool" aria-label="Redo"><svg><use href="#redo"/></svg></button>
        <span class="sep"></span>
        <button class="tool" aria-label="Link"><svg><use href="#link"/></svg></button>
        <button class="tool" aria-label="Unlink"><svg><use href="#unlink"/></svg></button>
        <button class="tool" aria-label="Bind to Space Warp"><svg><use href="#bind"/></svg></button>
        <span class="sep"></span>
        <span class="select filter-select"><select aria-label="Selection filter"><option>All</option></select></span>
        <button class="tool on" aria-label="Select Object"><svg><use href="#cursor"/></svg></button>
        <button class="tool" aria-label="Select by Name"><svg><use href="#byname"/></svg></button>
        <button class="tool more" aria-label="Rectangular Region"><svg><use href="#rect"/></svg></button>
        <button class="tool" aria-label="Window / Crossing"><svg><use href="#crossing"/></svg></button>
        <span class="sep"></span>
        <button class="tool" aria-label="Move"><svg><use href="#move"/></svg></button>
        <button class="tool" aria-label="Rotate"><svg><use href="#rotate"/></svg></button>
        <button class="tool more" aria-label="Scale"><svg><use href="#scale"/></svg></button>
        <button class="tool more" aria-label="Place"><svg><use href="#place"/></svg></button>
        <span class="select coord-select"><select aria-label="Reference coordinates"><option>View</option></select></span>
        <button class="tool more" aria-label="Pivot Center"><svg><use href="#pivot"/></svg></button>
        <span class="sep"></span>
        <button class="tool" aria-label="Manipulate"><svg><use href="#manip"/></svg></button>
        <button class="tool on" aria-label="Keyboard Override"><svg><use href="#keys"/></svg></button>
        <span class="sep"></span>
        <button class="tool more" aria-label="Snaps"><svg><use href="#snap"/></svg></button>
        <button class="tool" aria-label="Angle Snap"><svg><use href="#angle"/></svg></button>
        <button class="tool" aria-label="Percent Snap"><svg><use href="#percent"/></svg></button>
        <button class="tool" aria-label="Spinner Snap"><svg><use href="#spinsnap"/></svg></button>
        <span class="sep"></span>
        <button class="tool" aria-label="Edit Named Sets"><svg><use href="#braces"/></svg></button>
        <span class="select set-select"><select aria-label="Named selection sets"><option>Create Selection Set</option></select></span>
        <span class="sep"></span>
        <button class="tool" aria-label="Mirror"><svg><use href="#mirror"/></svg></button>
        <button class="tool more" aria-label="Align"><svg><use href="#align"/></svg></button>
        <span class="sep"></span>
        <button class="tool" aria-label="Scene Explorer"><svg><use href="#sheet"/></svg></button>
        <button class="tool" aria-label="Layer Explorer"><svg><use href="#layersheet"/></svg></button>
        <span class="sep"></span>
        <button class="tool on" aria-label="Toggle Ribbon"><svg><use href="#ribbonicon"/></svg></button>
        <button class="tool" aria-label="Curve Editor"><svg><use href="#curve"/></svg></button>
        <button class="tool" aria-label="Schematic View"><svg><use href="#schematic"/></svg></button>
        <span class="sep"></span>
        <button class="tool more" aria-label="Material Editor"><svg><use href="#graph"/></svg></button>
        <span class="sep"></span>
        <button class="tool" aria-label="Render Setup"><svg><use href="#rsetup"/></svg></button>
        <button class="tool" aria-label="Rendered Frame"><svg><use href="#rframe"/></svg></button>
        <button class="tool more" aria-label="Render"><svg><use href="#render"/></svg></button>
        <span class="grip"></span>
        <span class="select path-select"><select aria-label="Project folder"><option>C:\Users\Ky...ds Max 2022</option></select></span>
        <div class="project">
            <button class="tool" aria-label="Project Setup"><svg><use href="#scrollgear"/></svg></button>
            <button class="tool" aria-label="Project Folder"><svg><use href="#scrollfolder"/></svg></button>
            <button class="tool" aria-label="Project Tree"><svg><use href="#scrolltree"/></svg></button>
            <button class="tool" aria-label="Project Nodes"><svg><use href="#scrollnodes"/></svg></button>
        </div>
        <span class="grip"></span>
        <button class="tool" aria-label="Camera"><svg class="t"><use href="#moviecam"/></svg></button>
        <button class="tool" aria-label="Add Camera"><svg><use href="#camplus"/></svg></button>
        <button class="tool" aria-label="Light"><svg><use href="#bulbteal"/></svg></button>
        <button class="tool" aria-label="Sun"><svg><use href="#sun"/></svg></button>
        <button class="tool" aria-label="Forest"><svg><use href="#trees"/></svg></button>
        <button class="tool" aria-label="Proxy Tree"><svg><use href="#halftree"/></svg></button>
        <button class="tool" aria-label="Tree List"><svg><use href="#treelist"/></svg></button>
        <button class="tool" aria-label="Tree Page"><svg><use href="#treepage"/></svg></button>
        <button class="tool" aria-label="Ring"><svg><use href="#ringgear"/></svg></button>
        <button class="tool" aria-label="Materials"><svg><use href="#matstack"/></svg></button>
        <button class="tool" aria-label="Light Setup"><svg><use href="#bulbgear"/></svg></button>
        <button class="tool" aria-label="Render Window"><svg><use href="#winteal"/></svg></button>
        <button class="tool" aria-label="Play Window"><svg><use href="#winplay"/></svg></button>
        <button class="tool" aria-label="Play Quad"><svg><use href="#quadplay"/></svg></button>
        <button class="tool" aria-label="Teapot"><svg><use href="#whitepot"/></svg></button>
        <div class="plugins">
            <span class="grip"></span>
            <button class="tool" aria-label="Forest Pack"><span class="badge badge-fp">F<small>P</small></span></button>
            <button class="tool" aria-label="Forest Objects"><svg><use href="#greentrees"/></svg></button>
            <button class="tool" aria-label="Forest Tools"><svg><use href="#tools"/></svg></button>
            <button class="tool" aria-label="Forest List"><svg><use href="#listwin"/></svg></button>
            <button class="tool" aria-label="Forest Grid"><svg><use href="#gridwin"/></svg></button>
            <span class="grip"></span>
            <button class="tool" aria-label="RailClone"><span class="badge badge-rc">R<small>C</small></span></button>
            <button class="tool" aria-label="RailClone Tools"><svg><use href="#tools"/></svg></button>
            <button class="tool" aria-label="RailClone List"><svg><use href="#listwin"/></svg></button>
        </div>
    </div>

    <section class="ribbon">
        <span class="grip"></span>
        <div class="ribbon-main">
            <div class="tabs">
                <button class="active">Get Started</button>
                <button>Object Inspection</button>
                <button>Basic Modeling</button>
                <button>Materials</button>
                <button>Object Placement</button>
                <button>Populate</button>
                <button>View</button>
                <button>Lighting And Rendering</button>
                <button class="collapse" aria-label="Minimize ribbon"><span class="collapse-box"></span><span class="arrow"></span></button>
            </div>
            <div class="panels">
                <div class="panel options">
                    <div class="panel-body">
                        <button><svg><use href="#customizeui"/></svg><span>Customize</span><i class="arrow"></i></button>
                    </div>
                    <h2>Options</h2>
                </div>
                <div class="panel file">
                    <div class="panel-body">
                        <button><svg><use href="#filenew"/></svg><span>File<br>New</span></button>
                        <button class="low"><svg><use href="#fileopen"/></svg><span>Open</span></button>
                    </div>
                    <h2>File <i class="arrow"></i></h2>
                </div>
                <div class="panel insert">
                    <div class="panel-body">
                        <button class="low"><svg><use href="#filelink"/></svg><span>Links</span></button>
                        <button class="low"><svg><use href="#linkmanage"/></svg><span>Links</span></button>
                        <span class="divider"></span>
                        <button class="small" aria-label="Import"><svg><use href="#import"/></svg></button>
                        <button class="small" aria-label="Export"><svg><use href="#cubedoc"/></svg></button>
                        <span class="divider"></span>
                        <button class="xref"><svg><use href="#xref"/></svg><span>XRef Objects</span></button>
                    </div>
                    <h2>Insert</h2>
                </div>
                <div class="panel community">
                    <div class="panel-body">
                        <button class="low"><svg><use href="#three"/></svg><span>Home</span></button>
                    </div>
                    <h2>Community <i class="arrow"></i></h2>
                </div>
                <div class="panel videos">
                    <div class="panel-body">
                        <button class="low"><svg><use href="#reelnew"/></svg><span>New</span></button>
                        <button class="low"><svg><use href="#reel"/></svg><span>Essentials</span></button>
                        <button class="low" aria-label="How-to videos"><svg><use href="#film"/></svg></button>
                        <span class="divider"></span>
                        <button class="low"><svg><use href="#book"/></svg><span>Path...</span></button>
                        <button class="low"><svg><use href="#question"/></svg><span>Help</span></button>
                    </div>
                    <h2>Videos &amp; Tutorials <i class="arrow"></i></h2>
                </div>
            </div>
        </div>
        <!-- floating Corona toolbar, undocked over the ribbon -->
        <div class="floating">
            <span class="grip"></span>
            <button class="tool more" aria-label="Corona Render"><svg><use href="#cpot"/></svg></button>
            <button class="tool" aria-label="Corona"><svg><use href="#corona"/></svg></button>
            <button class="tool" aria-label="Frame Buffer"><svg><use href="#cframe"/></svg></button>
            <span class="sep"></span>
            <button class="tool" aria-label="Light Lister"><svg><use href="#cbulb"/></svg></button>
            <button class="tool" aria-label="Camera Lister"><svg><use href="#ccam"/></svg></button>
            <span class="sep"></span>
            <button class="tool" aria-label="Corona Camera"><svg><use href="#ccam2"/></svg></button>
            <span class="sep"></span>
            <button class="tool" aria-label="Rectangle Light"><svg><use href="#clrect"/></svg></button>
            <button class="tool" aria-label="Dome Light"><svg><use href="#cldome"/></svg></button>
            <button class="tool" aria-label="Sphere Light"><svg><use href="#clsphere"/></svg></button>
            <button class="tool" aria-label="Mesh Light"><svg><use href="#clpot"/></svg></button>
            <button class="tool" aria-label="Spot Light"><svg><use href="#clcone"/></svg></button>
            <button class="tool" aria-label="Corona Sun"><svg><use href="#clsun"/></svg></button>
            <button class="tool" aria-label="Disc Light"><svg><use href="#cldisc"/></svg></button>
            <span class="sep"></span>
            <button class="tool" aria-label="Scatter"><svg><use href="#cscatter"/></svg></button>
            <button class="tool" aria-label="Proxy"><svg><use href="#cproxy"/></svg></button>
            <button class="tool" aria-label="Decal"><svg><use href="#cdecal"/></svg></button>
            <button class="tool" aria-label="Volume Grid"><svg><use href="#cfur"/></svg></button>
            <button class="tool" aria-label="Grass"><svg><use href="#cgrass"/></svg></button>
            <span class="sep"></span>
            <button class="tool more" aria-label="Material"><svg><use href="#cball"/></svg></button>
            <button class="tool" aria-label="Material Library"><svg><use href="#cfour"/></svg></button>
            <button class="tool" aria-label="Cosmos"><svg><use href="#cghost"/></svg></button>
            <button class="tool" aria-label="Render Region"><svg><use href="#cregion"/></svg></button>
            <span class="sep"></span>
            <button class="tool" aria-label="Converter"><svg><use href="#cconvert"/></svg></button>
            <button class="tool" aria-label="Corona Help"><svg><use href="#chelp"/></svg></button>
        </div>
    </section>

    <main class="workspace">
        <aside class="layouts">
            <span class="grip-h"></span>
            <div class="layouts-body">
                <button class="expand" aria-label="Expand"></button>
                <button class="layout-tab" aria-label="Quad layout"><i></i><i></i><i></i><i></i></button>
            </div>
        </aside>

        <section class="explorer">
            <span class="grip-h"></span>
            <nav class="explorer-menu">
                <a href="#">Select</a>
                <a href="#">Display</a>
                <a href="#">Edit</a>
                <a href="#">Customize</a>
            </nav>
            <div class="explorer-tools">
                <input type="text" aria-label="Find">
                <button aria-label="Clear"><svg viewBox="0 0 24 24"><path d="m5 5 14 14M19 5 5 19" stroke="#a2a2a2" stroke-width="4"/></svg></button>
                <button class="on" aria-label="Filter"><svg><use href="#filtericon"/></svg></button>
                <span class="sep-light"></span>
                <button aria-label="Lock"><svg><use href="#lock"/></svg></button>
                <button aria-label="New layer"><svg><use href="#addlayer"/></svg></button>
                <button aria-label="Add to layer"><svg><use href="#layeradd"/></svg></button>
                <button aria-label="Hierarchy"><svg><use href="#hier"/></svg></button>
                <button aria-label="Active layer"><svg><use href="#layertop"/></svg></button>
                <button aria-label="Visible layers"><svg><use href="#eyelayer"/></svg></button>
                <button aria-label="Frozen layers"><svg><use href="#snowlayer"/></svg></button>
            </div>
            <div class="explorer-body">
                <div class="filters">
                    <button class="on" aria-label="Geometry"><svg><use href="#circle"/></svg></button>
                    <button class="on" aria-label="Shapes"><svg><use href="#shapes"/></svg></button>
                    <button class="on" aria-label="Lights"><svg><use href="#bulb"/></svg></button>
                    <button class="on" aria-label="Cameras"><svg><use href="#camera"/></svg></button>
                    <button class="on" aria-label="Helpers"><svg><use href="#ruler"/></svg></button>
                    <button class="on" aria-label="Space Warps"><svg><use href="#waves"/></svg></button>
                    <button class="on" aria-label="Groups"><svg><use href="#groups"/></svg></button>
                    <button class="on" aria-label="XRefs"><svg><use href="#xrefs"/></svg></button>
                    <button class="on" aria-label="Bones"><svg><use href="#bone"/></svg></button>
                    <button class="on" aria-label="Containers"><svg><use href="#box"/></svg></button>
                    <button class="on" aria-label="Frozen"><svg><use href="#snow"/></svg></button>
                    <button class="on" aria-label="Hidden"><svg><use href="#eye"/></svg></button>
                    <hr>
                    <button aria-label="All"><svg><use href="#doc"/></svg></button>
                    <button aria-label="None"><svg><use href="#blank"/></svg></button>
                    <button aria-label="Invert"><svg><use href="#docline"/></svg></button>
                    <hr>
                    <button aria-label="Advanced filter"><svg><use href="#funnelgear"/></svg></button>
                    <button aria-label="Custom filter"><svg><use href="#funnel"/></svg></button>
                    <button aria-label="Container"><svg><use href="#brick"/></svg></button>
                </div>
                <div class="tree">
                    <svg class="cross" viewBox="0 0 100 100" preserveAspectRatio="none"><path d="m0 0 100 100M100 0 0 100"/></svg>
                    <div class="scrollbar">
                        <button aria-label="Scroll left"><svg viewBox="0 0 12 12"><path d="M9 1 4 6l5 5"/></svg></button>
                        <span class="track"><span class="thumb"></span></span>
                        <button aria-label="Scroll right"><svg viewBox="0 0 12 12"><path d="m3 1 5 5-5 5"/></svg></button>
                    </div>
                </div>
            </div>
            <div class="explorer-footer">
                <input type="text" value="Design Standard" aria-label="Explorer name">
                <button class="drop" aria-label="Explorers"><span class="arrow"></span></button>
                <span class="sep-light"></span>
                <button class="on" aria-label="Sort by layer"><svg><use href="#layers"/></svg></button>
                <button aria-label="Sort by hierarchy"><svg><use href="#nodes"/></svg></button>
                <span class="sep-light"></span>
                <span>Selection Set:</span>
                <span class="overflow">»</span>
            </div>
        </section>

        <div class="view-edge"></div>
        <section class="viewport"></section>
        <div class="view-strip"><div class="view-grid"></div><div class="view-active"></div></div>

        <aside class="command">
            <span class="grip-h"></span>
            <div class="command-tabs">
                <button class="active" aria-label="Create"><svg><use href="#create"/></svg></button>
                <button aria-label="Modify"><svg><use href="#modify"/></svg></button>
                <button aria-label="Hierarchy"><svg><use href="#hierarchy"/></svg></button>
                <button aria-label="Motion"><svg><use href="#motion"/></svg></button>
                <button aria-label="Display"><svg><use href="#display"/></svg></button>
                <button aria-label="Utilities"><svg><use href="#wrench"/></svg></button>
            </div>
            <div class="categories">
                <button aria-label="Geometry"><svg><use href="#circle"/></svg></button>
                <button aria-label="Shapes"><svg><use href="#shapes"/></svg></button>
                <button aria-label="Lights"><svg><use href="#bulb"/></svg></button>
                <button class="on" aria-label="Cameras"><svg><use href="#camera"/></svg></button>
                <button aria-label="Helpers"><svg><use href="#ruler"/></svg></button>
                <button aria-label="Space Warps"><svg><use href="#waves"/></svg></button>
                <button aria-label="Systems"><svg><use href="#gears"/></svg></button>
            </div>
            <span class="select type-select"><select aria-label="Object category"><option>Standard</option></select></span>
            <div class="rollouts">
                <div class="rollout-list">
                    <section class="rollout">
                        <h3><i class="arrow"></i>Object Type<i class="dots"></i></h3>
                        <div class="autogrid"><input type="checkbox" id="autogrid" disabled><label for="autogrid">AutoGrid</label></div>
                        <div class="types">
                            <button>Physical</button>
                            <button>Target</button>
                            <button>Free</button>
                            <button>CoronaCam</button>
                        </div>
                    </section>
                    <section class="rollout">
                        <h3><i class="arrow"></i>Name and Color<i class="dots"></i></h3>
                        <div class="name-row">
                            <input type="text" value="CoronaCamera001" aria-label="Object name">
                            <button class="swatch" aria-label="Object color"></button>
                        </div>
                    </section>
                </div>
                <span class="rollout-track"></span>
            </div>
        </aside>
    </main>

    <section class="timeline">
        <span class="grip"></span>
        <div class="timeline-main">
            <div class="slider">
                <button>&lt;</button>
                <button class="handle">0 / 100</button>
                <button>&gt;</button>
            </div>
            <div class="trackbar">
                <button aria-label="Mini curve editor"><svg><use href="#minicurve"/></svg></button>
                <div class="ticks" id="ticks"></div>
            </div>
        </div>
    </section>

    <footer class="status">
        <div class="listener">
            <input class="macro" type="text" aria-label="Macro recorder">
            <input type="text" value="MAXScript Mini" aria-label="Script listener">
        </div>
        <div class="messages">
            <p>1 Camera Selected</p>
            <p>Click or click-and-drag to select objects</p>
        </div>
        <div class="coords">
            <div class="row">
                <button aria-label="Isolate"><svg><use href="#isolate"/></svg></button>
                <button aria-label="Selection lock"><svg><use href="#lock"/></svg></button>
                <button aria-label="Absolute mode"><svg><use href="#abs"/></svg></button>
                <div class="axes">
                    <label>X: <input type="text"></label>
                    <label>Y: <input type="text"></label>
                    <label>Z: <input type="text"></label>
                    <span>Grid = 10,0cm</span>
                </div>
            </div>
            <div class="row second">
                <span class="sep"></span>
                <button class="raised" aria-label="Security"><svg><use href="#shield"/></svg></button>
                <span>Enabled:</span>
                <span class="led"></span>
                <button class="raised zero">0</button>
                <span class="sep"></span>
                <button class="tag"><svg><use href="#cubeline"/></svg>Add Time Tag</button>
            </div>
        </div>
        <div class="playback">
            <div class="row">
                <button aria-label="Go to start"><svg><use href="#tostart"/></svg></button>
                <span class="sep"></span>
                <button aria-label="Previous frame"><svg><use href="#prev"/></svg></button>
                <button class="more" aria-label="Play"><svg><use href="#play"/></svg></button>
                <button aria-label="Next frame"><svg><use href="#next"/></svg></button>
                <span class="sep"></span>
                <button aria-label="Go to end"><svg><use href="#toend"/></svg></button>
            </div>
            <div class="row">
                <button aria-label="Key mode"><svg><use href="#keymode"/></svg></button>
                <span class="sep"></span>
                <span class="frame"><input type="text" value="0" aria-label="Current frame"><i></i></span>
                <span class="sep"></span>
                <button aria-label="Time configuration"><svg><use href="#clock"/></svg></button>
            </div>
        </div>
        <div class="keys">
            <button class="setkey" aria-label="Set keys"><svg><use href="#setkey"/></svg></button>
            <div class="auto">
                <button>Auto</button>
                <button>Set K.</button>
            </div>
            <div class="key-filters">
                <span class="select key-select"><select aria-label="Key set"><option>Selected</option></select></span>
                <div class="row">
                    <button class="more" aria-label="Tangents"><svg><use href="#tangent"/></svg></button>
                    <button class="filters-button">Filters...</button>
                </div>
            </div>
        </div>
        <div class="nav">
            <button class="more" aria-label="Zoom"><svg><use href="#zoomicon"/></svg></button>
            <button aria-label="Zoom extents"><svg><use href="#zoomcube"/></svg></button>
            <button aria-label="Orbit"><svg><use href="#orbit"/></svg></button>
            <button class="more" aria-label="Zoom region"><svg><use href="#region"/></svg></button>
            <button aria-label="Field of view"><svg><use href="#fov"/></svg></button>
            <button class="more" aria-label="Dolly"><svg><use href="#dolly"/></svg></button>
            <button class="more" aria-label="Arc rotate"><svg><use href="#arc"/></svg></button>
            <button aria-label="Maximize viewport"><svg><use href="#maximize"/></svg></button>
        </div>
    </footer>

    <div class="dialog-back">
        <div class="dialog" role="alertdialog" aria-labelledby="dialog-title">
            <div class="dialog-head">
                <h2 id="dialog-title">Microsoft .NET Framework</h2>
                <button aria-label="Close"><svg viewBox="0 0 16 16"><path d="m1 1 14 14M15 1 1 15"/></svg></button>
            </div>
            <div class="dialog-body">
                <svg viewBox="0 0 48 48"><circle cx="24" cy="25" r="23" fill="#aaa"/><circle cx="23" cy="23" r="22" fill="#eee" stroke="#999"/><circle cx="23" cy="23" r="20" fill="url(#error)"/><path d="m14 14 18 18M32 14 14 32" stroke="#e8e8e8" stroke-width="6"/></svg>
                <div>
                    <p>Unhandled exception has occurred in a<br>component in your application. If you click<br>Continue, the application will ignore this error<br>and attempt to continue.</p>
                    <p>Index was outside the bounds of the array.</p>
                </div>
            </div>
            <div class="dialog-buttons">
                <button class="details"><i class="arrow"></i>Details</button>
                <button>Continue</button>
            </div>
        </div>
    </div>

    <script src="script.js"></script>
</body>
</html>
```

FILE: styles.css
```css
* {
    box-sizing: border-box;
}
body {
    margin: 0;
    min-height: 100vh;
    display: flex;
    flex-direction: column;
    background: #444;
    color: #ddd;
    font: 15px/20px "DejaVu Sans Condensed", "DejaVu Sans", sans-serif;
}
button, input, select {
    font: inherit;
    color: inherit;
    margin: 0;
    padding: 0;
    border: 0;
    background: none;
    border-radius: 0;
}
a {
    color: inherit;
    text-decoration: none;
}
h1, h2, h3, p {
    margin: 0;
    font-weight: normal;
    font-size: inherit;
}
button svg {
    display: block;
}
.sprite {
    position: absolute;
    width: 0;
    height: 0;
}

/* icon colours */
.g { fill: #d0d0d0; }
.t { fill: #46c0c0; }
.o { fill: #fbb029; }
.d { fill: #383838; }
.gs, .ts, .os, .ds { fill: none; }
.gs { stroke: #d0d0d0; }
.ts { stroke: #46c0c0; }
.os { stroke: #fbb029; }
.ds { stroke: #383838; }
.w1 { stroke-width: 1; }
.w2 { stroke-width: 2; }
.w3 { stroke-width: 3; }
.w4 { stroke-width: 4; }
.dim { stroke: #3f8b88; stroke-width: 1; }
.outlined { stroke: #333; }

.arrow {
    display: inline-block;
    width: 11px;
    height: 7px;
    background: currentColor;
    clip-path: polygon(0 0, 100% 0, 50% 100%);
}
.grip {
    flex: none;
    align-self: stretch;
    width: 12px;
    margin: 6px 0 4px;
    background: radial-gradient(circle, #bbb 1px, transparent 1px) 2px 0 / 4px 4px content-box repeat;
    padding: 0 5px 0 3px;
}
.grip-h {
    display: block;
    height: 13px;
    margin: 0 6px;
    padding: 3px 0 3px;
    background: radial-gradient(circle, #bbb 1px, transparent 1px) 0 0 / 4px 4px content-box repeat;
}
.sep {
    flex: none;
    width: 1px;
    height: 24px;
    margin: 0 4px;
    background: #111;
}
.sep-light {
    width: 2px;
    height: 34px;
    background: #777;
    border-left: 1px solid #222;
}
.on {
    background: #5f8bc4;
}
.more {
    position: relative;
}
.more::after {
    content: "";
    position: absolute;
    right: 2px;
    bottom: 0;
    width: 6px;
    height: 6px;
    background: #ddd;
    clip-path: polygon(100% 0, 100% 100%, 0 100%);
}
.select {
    position: relative;
    display: inline-block;
    background: #646464;
    border: 1px solid #505050;
}
.select select {
    appearance: none;
    width: 100%;
    height: 100%;
    padding: 0 24px 0 8px;
}
.select::after {
    content: "";
    position: absolute;
    right: 10px;
    top: 50%;
    width: 11px;
    height: 8px;
    margin-top: -4px;
    background: #ddd;
    clip-path: polygon(0 0, 100% 0, 50% 100%);
    pointer-events: none;
}

/* title */
.titlebar {
    display: flex;
    align-items: center;
    height: 34px;
    padding-left: 2px;
    background: #fff;
    color: #000;
}
.titlebar h1 {
    flex: 1;
    font: 17px/24px "Noto Sans", sans-serif;
}
.app-icon {
    width: 24px;
    height: 24px;
    margin-right: 5px;
}
.window-buttons {
    display: flex;
}
.window-buttons button {
    width: 70px;
    height: 32px;
    display: grid;
    place-items: center;
}
.window-buttons svg, .dialog-head svg {
    width: 16px;
    height: 16px;
    fill: none;
    stroke: #000;
}

/* menu */
.menubar {
    display: flex;
    align-items: center;
    height: 34px;
    padding: 0 3px 0 13px;
    gap: 27px;
    background: linear-gradient(#565656, #434343);
    border-bottom: 1px solid #111;
    color: #fff;
    font-size: 17px;
}
.menubar a {
    padding-bottom: 2px;
}
.user {
    display: flex;
    align-items: center;
    align-self: stretch;
    width: 180px;
    margin-left: auto;
    background: #d3d3d3;
    color: #000;
}
.user svg {
    width: 24px;
    height: 24px;
    margin: 0 1px;
    fill: #6f97e0;
    stroke: #111;
    stroke-width: 1;
}
.user-name {
    flex: 1;
    align-self: stretch;
    margin: 5px 6px 0 0;
    background: #808080;
}
.user .arrow {
    margin-right: 6px;
}
.workspaces {
    margin-left: 14px;
    color: #ddd;
    font-size: 15px;
}
.workspace-select {
    width: 208px;
    height: 30px;
    margin-left: -20px;
    font-size: 15px;
    color: #ddd;
}

/* main toolbar */
.toolbar {
    display: flex;
    align-items: center;
    height: 48px;
    padding-left: 1px;
}
.tool {
    flex: none;
    width: 44px;
    height: 44px;
    margin: 0 2px;
    display: grid;
    place-items: center;
}
.tool svg {
    width: 34px;
    height: 34px;
    overflow: visible;
}
.tool.on {
    border-radius: 5px;
}
.toolbar .select {
    flex: none;
    height: 26px;
    margin-bottom: 14px;
    line-height: 18px;
}
.toolbar .filter-select, .toolbar .coord-select {
    width: 105px;
}
.toolbar .set-select {
    width: 180px;
}
.toolbar .set-select select {
    padding: 0 20px 0 4px;
}
.toolbar .path-select {
    width: 222px;
    height: 44px;
    margin: 0 1px;
}
.project {
    display: flex;
}
.project .tool {
    margin: 0 1px;
}
.plugins {
    display: flex;
    align-items: center;
    align-self: stretch;
    margin-left: auto;
}
.plugins svg {
    width: 26px;
    height: 26px;
}
.badge {
    width: 24px;
    height: 24px;
    border: 1px solid #fff;
    color: #fff;
    font: bold 15px/22px "Open Sans", sans-serif;
}
.badge small {
    font-size: 11px;
}
.badge-fp { background: #de8f3f; }
.badge-rc { background: #3f8fc9; }

/* ribbon */
.ribbon {
    position: relative;
    display: flex;
    height: 178px;
    font: 17px/25px "Noto Sans", sans-serif;
}
.ribbon > .grip {
    margin: 4px 0 0;
}
.ribbon-main {
    flex: 1;
    border-top: 2px solid #6c6c6c;
    border-left: 1px solid #6c6c6c;
    background: #505050;
}
.tabs {
    display: flex;
    height: 30px;
    padding: 3px 0 0 8px;
    border-bottom: 2px solid #2b2b2b;
    color: #aaa;
}
.tabs button {
    padding: 0 14px;
}
.tabs .active {
    padding: 0 11px;
    border: 1px solid #2b2b2b;
    border-bottom: 0;
    background: linear-gradient(#5c5c5c, #707070);
    color: #ddd;
    margin-right: 3px;
}
.tabs .collapse {
    display: flex;
    align-items: center;
    gap: 8px;
    margin-left: 34px;
    padding: 0 0 4px;
}
.collapse-box {
    display: grid;
    place-items: center;
    width: 20px;
    height: 11px;
    border-radius: 3px;
    background: #e3e3ea;
}
.collapse-box::after {
    content: "";
    width: 9px;
    height: 5px;
    background: #333;
    clip-path: polygon(50% 0, 100% 100%, 0 100%);
}
.collapse .arrow {
    width: 8px;
    height: 5px;
    background: #ccc;
}
.panels {
    display: flex;
    gap: 2px;
    height: 146px;
    padding-left: 4px;
    background: linear-gradient(#464646, #363636);
    border-bottom: 2px solid #2b2b2b;
}
.panel {
    display: flex;
    flex-direction: column;
    border-right: 1px solid #2f2f2f;
    background: #5c5c5c;
}
.panel-body {
    flex: 1;
    display: flex;
    justify-content: center;
    padding-top: 9px;
}
.panel-body button {
    display: flex;
    flex-direction: column;
    align-items: center;
    justify-content: flex-start;
}
.panel-body svg {
    width: 46px;
    height: 46px;
    margin-bottom: 9px;
    overflow: visible;
}
.low span {
    margin-top: 25px;
}
.panel h2 {
    height: 25px;
    background: linear-gradient(#4c4c4c, #565656);
    text-align: center;
    line-height: 26px;
}
.panel h2 .arrow {
    margin: 0 0 3px 4px;
}
.options { width: 118px; }
.file { width: 119px; }
.insert { width: 474px; }
.community { width: 128px; }
.videos { width: 416px; }
.file button { width: 56px; }
.insert button { width: 77px; }
.insert .small { width: 68px; }
.videos button { width: 80px; }
.insert .panel-body, .videos .panel-body {
    justify-content: flex-start;
}
.options .arrow {
    width: 9px;
    height: 5px;
    margin-top: 4px;
}
.divider {
    width: 2px;
    margin: -4px 6px 7px;
    background: #444;
}
.insert .xref {
    width: auto;
    flex-direction: row;
    gap: 6px;
    height: 66px;
    align-items: center;
    padding: 0 0 0 10px;
}
.xref svg {
    width: 22px;
    height: 22px;
    margin: 0;
}
.floating {
    position: absolute;
    left: 201px;
    top: 84px;
    display: flex;
    align-items: center;
    height: 47px;
    background: #434343;
    border-top: 1px solid #383838;
}
.floating svg {
    width: 32px;
    height: 32px;
}
.floating .grip {
    width: 11px;
}
.floating .sep {
    margin: 0 6px 0 5px;
}

/* workspace */
.workspace {
    flex: 1;
    display: flex;
    margin-top: 9px;
}
.layouts {
    width: 60px;
    display: flex;
    flex-direction: column;
}
.layouts .grip-h {
    margin: 0 2px;
}
.layouts-body {
    flex: 1;
    display: flex;
    flex-direction: column;
    justify-content: flex-end;
    gap: 15px;
    padding-bottom: 5px;
    background: #303030;
    border-right: 2px solid #161616;
}
.expand {
    display: grid;
    place-items: center;
    width: 29px;
    height: 31px;
    margin-left: 15px;
    border: 1px solid #222;
    border-radius: 4px;
    background: #484848;
}
.expand::after {
    content: "";
    width: 8px;
    height: 14px;
    background: #ddd;
    clip-path: polygon(0 0, 100% 50%, 0 100%);
}
.layout-tab {
    display: grid;
    grid-template: 1fr 1fr / 1fr 1fr;
    gap: 2px;
    height: 65px;
    margin-left: 6px;
    padding: 11px 2px 12px 5px;
    border-radius: 6px 0 0 6px;
    background: linear-gradient(#56698a, #3a7ad6);
}
.layout-tab i {
    border: 1px solid #26384f;
    border-radius: 2px;
    background: linear-gradient(#5f6772, #4c5666);
}
.explorer {
    width: 572px;
    display: flex;
    flex-direction: column;
    color: #fff;
}
.explorer .grip-h {
    margin: 0 10px;
}
.explorer-menu {
    display: flex;
    gap: 24px;
    padding: 2px 0 1px 23px;
    font: 17px/28px "Noto Sans", sans-serif;
}
.explorer-tools {
    display: flex;
    align-items: center;
    height: 41px;
    padding: 0 0 2px 10px;
}
.explorer-tools input {
    width: 225px;
    height: 30px;
    border: 1px solid #666;
}
.explorer-tools button {
    width: 36px;
    height: 36px;
    display: grid;
    place-items: center;
}
.explorer-tools svg, .explorer-footer svg, .filters svg {
    width: 23px;
    height: 23px;
}
.explorer-tools .sep-light {
    margin: 0 1px 0 3px;
}
.explorer-body {
    flex: 1;
    display: flex;
    padding: 0 3px 0 6px;
}
.filters {
    display: flex;
    flex-direction: column;
    gap: 3px;
    width: 30px;
    padding-top: 3px;
}
.filters button {
    display: grid;
    place-items: center;
    width: 27px;
    height: 28px;
}
.filters hr {
    width: 23px;
    height: 2px;
    margin: 0;
    border: 0;
    border-top: 1px solid #222;
    background: #888;
}
.tree {
    position: relative;
    flex: 1;
    border: 2px solid #d11;
    border-width: 2px 1px 0 2px;
    background: #fff;
    overflow: hidden;
}
.cross {
    position: absolute;
    width: 100%;
    height: 100%;
}
.cross path {
    stroke: #d01818;
    stroke-width: 2;
    vector-effect: non-scaling-stroke;
}
.scrollbar {
    position: absolute;
    left: -2px;
    right: -1px;
    bottom: 0;
    display: flex;
    height: 26px;
    background: #f0f0f0;
}
.scrollbar button {
    width: 26px;
    display: grid;
    place-items: center;
}
.scrollbar svg {
    width: 14px;
    height: 14px;
    fill: none;
    stroke: #555;
    stroke-width: 2;
}
.track {
    flex: 1;
}
.thumb {
    display: block;
    width: 61%;
    height: 100%;
    background: #cdcdcd;
}
.explorer-footer {
    display: flex;
    align-items: center;
    height: 41px;
    padding: 0 4px 2px 10px;
    font: 17px/24px "DejaVu Sans Condensed", "DejaVu Sans", sans-serif;
}
.explorer-footer input {
    width: 218px;
    height: 30px;
    padding: 0 2px;
    border: 1px solid #666;
    color: #ee3;
}
.explorer-footer button {
    width: 36px;
    height: 36px;
    display: grid;
    place-items: center;
}
.explorer-footer .drop {
    width: 16px;
}
.explorer-footer .arrow {
    width: 6px;
    height: 4px;
    background: #000;
}
.explorer-footer .sep-light {
    margin: 0 1px;
}
.explorer-footer .sep-light + span {
    margin-left: 6px;
}
.overflow {
    margin: -20px 0 0 auto;
    color: #56569a;
    font-size: 20px;
}
.view-edge {
    width: 9px;
    margin-left: 3px;
    background: repeating-linear-gradient(transparent 0 17px, #666 17px 18px) #333;
}
.viewport {
    flex: 1;
    background: #808080;
}
.view-strip {
    display: flex;
    flex-direction: column;
    width: 21px;
}
.view-grid {
    flex: 1;
    border-bottom: 4px solid #444;
    background:
        linear-gradient(90deg, transparent 4px, #666 4px 5px, transparent 5px),
        repeating-linear-gradient(transparent 0 18px, #666 18px 19px),
        #333;
}
.view-active {
    flex: 1;
    border: 2px solid #7a6a3a;
    border-left: 0;
    background: #000;
}

/* command panel */
.command {
    width: 313px;
    display: flex;
    flex-direction: column;
    padding: 0 3px 0 9px;
}
.command .grip-h {
    margin: 0;
}
.command-tabs {
    display: flex;
    background: #383838;
    margin: 0 -3px 0 -2px;
}
.command-tabs button {
    width: 48px;
    height: 42px;
    padding-bottom: 4px;
    display: grid;
    place-items: center;
}
.command-tabs button + button {
    border-right: 1px solid #2b2b2b;
}
.command-tabs .active {
    background: #444;
}
.command-tabs svg {
    width: 25px;
    height: 25px;
}
.categories {
    display: flex;
    padding-top: 6px;
}
.categories button {
    width: 34px;
    height: 34px;
    margin: 0 1px;
    display: grid;
    place-items: center;
    border-radius: 4px;
}
.categories svg {
    width: 22px;
    height: 22px;
}
.type-select {
    height: 31px;
    margin: 8px 0 7px;
}
.rollouts {
    flex: 1;
    display: flex;
    gap: 4px;
}
.rollout-list {
    flex: 1;
}
.rollout-track {
    width: 9px;
    border-radius: 4px;
    background: #3b3b3b;
}
.rollout {
    margin-bottom: 6px;
    padding: 0 8px 8px;
    border-radius: 3px;
    background: #505050;
}
.rollout h3 {
    display: flex;
    align-items: center;
    gap: 10px;
    padding-left: 2px;
    color: #fff;
    font-size: 16px;
    font-weight: bold;
    line-height: 31px;
}
.rollout h3 .arrow {
    background: #ccc;
    width: 10px;
    height: 8px;
}
.dots {
    width: 10px;
    height: 10px;
    margin: 0 2px 4px auto;
    background: radial-gradient(circle, #aaa 1px, transparent 1px) 0 0 / 2px 2px;
    opacity: .3;
}
.autogrid {
    display: flex;
    align-items: center;
    justify-content: center;
    gap: 8px;
    padding: 7px 0 12px;
    color: #888;
}
.autogrid input {
    appearance: none;
    width: 19px;
    height: 19px;
    border: 1px solid #484848;
    background: #585858;
}
.types {
    display: grid;
    grid-template-columns: 1fr 1fr;
    gap: 7px;
}
.types button, .raised, .slider button, .keys button {
    border-radius: 5px;
    background: #646464;
}
.types button {
    height: 30px;
}
.name-row {
    display: flex;
    gap: 7px;
    padding-top: 2px;
}
.name-row input {
    flex: 1;
    min-width: 0;
    height: 31px;
    padding: 0 8px;
    background: #646464;
    color: #fff;
}
.swatch {
    width: 30px;
    height: 30px;
    border: 1px solid #000;
    background: #9bb3e6;
}

/* timeline */
.timeline {
    display: flex;
    height: 75px;
}
.timeline .grip {
    margin: 11px 0 2px;
}
.timeline-main {
    flex: 1;
}
.slider {
    display: flex;
    gap: 3px;
    padding: 6px 2px 7px;
}
.slider button {
    width: 22px;
    height: 25px;
}
.slider .handle {
    width: 184px;
}
.trackbar {
    display: flex;
    height: 37px;
    border-top: 1px solid #111;
}
.trackbar button {
    width: 76px;
    padding-right: 10px;
    display: grid;
    place-items: center;
}
.trackbar svg {
    width: 23px;
    height: 23px;
}
.ticks {
    flex: 1;
    display: flex;
    justify-content: space-between;
    margin-right: 75px;
    padding: 0 17px;
    background: #2b2b2b;
    color: #bbb;
}
.tick {
    position: relative;
    display: flex;
    flex-direction: column;
    align-items: center;
    justify-content: flex-end;
    width: 0;
}
.tick::before {
    content: "";
    position: absolute;
    top: 0;
    width: 1px;
    height: 17px;
    background: #777;
}
.tick.current::after {
    content: "";
    position: absolute;
    top: 1px;
    width: 11px;
    height: 35px;
    background: #c8bc2c;
    opacity: .6;
}

/* status */
.status {
    display: flex;
    height: 78px;
    padding: 5px 15px 2px 4px;
}
.row {
    display: flex;
    align-items: center;
}
.status button svg {
    width: 25px;
    height: 25px;
    margin: auto;
}
.listener {
    display: flex;
    flex-direction: column;
    gap: 2px;
    width: 154px;
    padding-right: 6px;
    border-right: 2px solid #2b2b2b;
    font: 16px/20px "Liberation Mono", monospace;
    color: #888;
}
.listener input {
    width: 148px;
    height: 35px;
    padding: 0 4px 8px;
    border: 2px solid #eee;
    border-top-color: #888;
    border-left-color: #888;
    background: #fff;
}
.listener .macro {
    background: #dcc3c5;
}
.messages {
    flex: 1;
    padding: 8px 4px 0;
    color: #fff;
}
.messages p {
    line-height: 20px;
    margin-bottom: 17px;
}
.coords {
    display: flex;
    flex-direction: column;
    align-items: flex-end;
    gap: 8px;
    margin-right: 58px;
    padding-top: 4px;
    color: #fff;
    font-size: 16px;
}
.coords .row {
    gap: 16px;
}
.axes {
    display: flex;
    align-items: center;
    gap: 19px;
    margin-left: -6px;
}
.axes label {
    display: flex;
    align-items: center;
    gap: 4px;
}
.axes input {
    width: 88px;
    height: 27px;
    background: #5a5a5a;
    border: 1px solid #4c4c4c;
}
.coords .row.second {
    gap: 8px;
}
.coords .second .sep {
    margin: 0;
}
.raised {
    width: 30px;
    height: 31px;
}
.zero {
    color: #fff;
    font-weight: bold;
    font-size: 17px;
    border: 3px solid #646464;
    background: #2f2f2f;
    box-shadow: inset 0 0 0 3px #eee;
    border-radius: 12px;
}
.led {
    width: 13px;
    height: 13px;
    border-radius: 50%;
    background: #4fd83f;
}
.tag {
    display: flex;
    align-items: center;
    gap: 10px;
    margin-left: 4px;
    color: #bbb;
}
.playback {
    display: flex;
    flex-direction: column;
    gap: 3px;
    margin-right: 15px;
}
.playback button {
    width: 33px;
    height: 32px;
}
.playback .sep {
    margin: 0 3px;
}
.frame {
    display: flex;
    align-items: center;
    justify-content: space-between;
    width: 99px;
    height: 25px;
    padding: 0 4px;
    background: #646464;
}
.frame input {
    width: 70px;
}
.frame i {
    width: 9px;
    height: 15px;
    background: #ddd;
    clip-path: polygon(50% 0, 100% 40%, 0 40%, 0 60%, 100% 60%, 50% 100%, 0 60%, 0 40%);
}
.keys {
    display: flex;
    gap: 5px;
    margin-right: 15px;
}
.keys .setkey {
    width: 64px;
    height: 67px;
}
.keys .setkey svg {
    width: 44px;
    height: 44px;
}
.auto {
    display: flex;
    flex-direction: column;
    gap: 2px;
}
.auto button {
    width: 70px;
    height: 31px;
}
.key-select {
    width: 171px;
    height: 26px;
    margin-bottom: 8px;
    display: block;
}
.key-filters .row {
    gap: 3px;
}
.key-filters .more {
    width: 34px;
    background: none;
}
.key-filters .filters-button {
    width: 134px;
    height: 31px;
}
.nav {
    display: grid;
    grid-template-columns: repeat(4, 34px);
    grid-auto-rows: 34px;
}
.nav svg {
    width: 22px;
    height: 22px;
}

/* error dialog */
.dialog-back {
    position: fixed;
    left: 50%;
    top: 50%;
    padding: 11px 2px 7px 15px;
    transform: translate(-50%, -50%);
    margin: -7px 0 0 -7px;
    background:
        linear-gradient(#000, #000) right bottom / 46px 7px no-repeat,
        repeating-linear-gradient(45deg, #fff 0 4px, #222 4px 5px) right top / 26px 10px no-repeat,
        repeating-linear-gradient(90deg, transparent 0 10px, #555 10px 11px),
        repeating-linear-gradient(transparent 0 10px, #555 10px 11px),
        #303030;
}
.dialog {
    width: 418px;
    background: #f0f0f0;
    color: #000;
    font: 16px/18px "Liberation Sans", sans-serif;
    box-shadow: 0 0 6px #000;
}
.dialog-head {
    display: flex;
    align-items: center;
    justify-content: space-between;
    height: 44px;
    padding: 0 16px 0 11px;
    background: #fff;
}
.dialog-head h2 {
    font: 17px/24px "Noto Sans", sans-serif;
}
.dialog-body {
    display: flex;
    gap: 14px;
    padding: 8px 8px 0;
}
.dialog-body svg {
    flex: none;
    width: 45px;
    height: 47px;
}
.dialog-body p {
    margin-bottom: 18px;
    white-space: nowrap;
}
.dialog-buttons {
    display: flex;
    justify-content: space-between;
    padding: 8px 9px 9px;
}
.dialog-buttons button {
    width: 98px;
    height: 21px;
    border: 1px solid #adadad;
    background: #e1e1e1;
}
.dialog-buttons .details {
    padding-right: 14px;
    border: 2px solid #0078d7;
    line-height: 17px;
}
.details .arrow {
    width: 7px;
    height: 4px;
    margin: 0 10px 3px 0;
}
```

FILE: script.js
```js
// Build the 0-100 frame ruler, labelled on every second frame
const ticks = document.getElementById("ticks");

for (let frame = 0; frame <= 100; frame++) {
    const tick = document.createElement("span");
    tick.className = frame === 0 ? "tick current" : "tick";
    if (frame % 2 === 0) {
        tick.textContent = frame;
    }
    ticks.appendChild(tick);
}
```
